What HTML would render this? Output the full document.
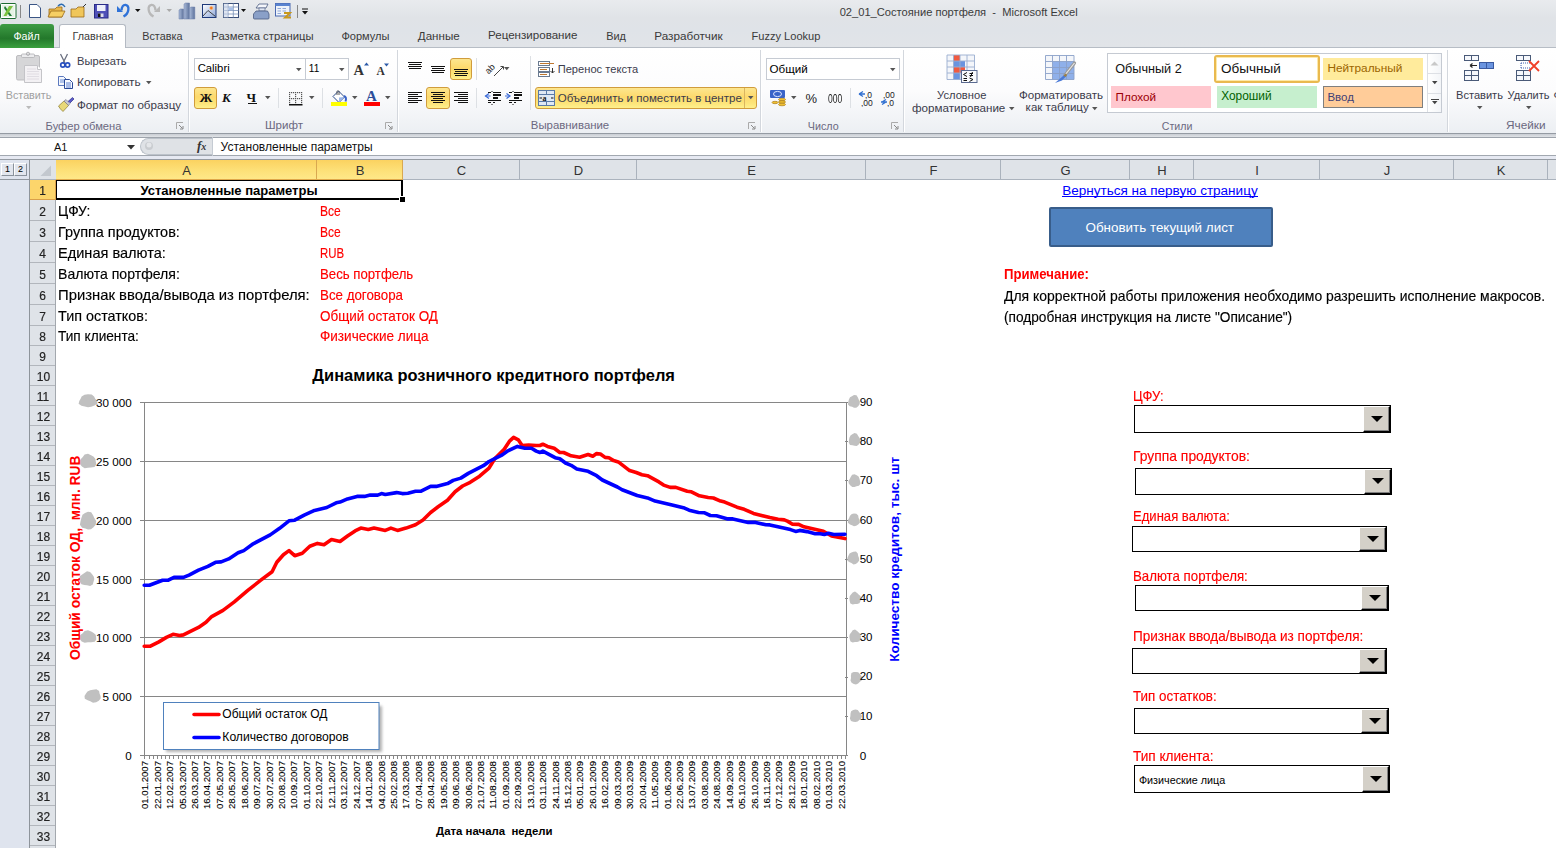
<!DOCTYPE html><html><head><meta charset="utf-8"><style>
*{margin:0;padding:0}
html,body{width:1556px;height:848px;overflow:hidden;background:#fff}
body{position:relative;font-family:"Liberation Sans",sans-serif}
.t{position:absolute;white-space:pre}
div{position:absolute}
svg{position:absolute}
</style></head><body>
<div style="position:absolute;left:0px;top:0px;width:1556px;height:47px;background:linear-gradient(#e9ebee 0px,#e0e3e7 18px,#dfe3e8 30px,#e1e4e8 46px)"></div>
<div class="t" style="left:839.7px;top:6.6px;font-size:11.14px;line-height:11.14px;color:#3b3b3b;">02_01_Состояние&#32;портфеля&#32;&#32;-&#32;&#32;Microsoft&#32;Excel</div>
<svg style="left:0;top:0" width="320" height="22">
 <rect x="0.5" y="3.5" width="15.5" height="15" rx="1" fill="#fff" stroke="#1b6b30"/>
 <rect x="2" y="5" width="12.5" height="12" fill="#e6f2e6"/>
 <path d="M5 6 L12 16 L9.5 16 L4 8 Z" fill="#1e7a36"/>
 <path d="M3.5 16 L9 6 L13 6 L6.5 16 Z" fill="#7cc33f"/>
 <rect x="20" y="5" width="1" height="13" fill="#888"/>
 <path d="M29.5 4.5 H37 L40.5 8 V17.5 H29.5 Z" fill="#fff" stroke="#3a5585"/>
 <path d="M49 9 H55 L57 7 H62 V17 H49 Z" fill="#e9b84a" stroke="#9a6a1a" stroke-width="0.8"/>
 <path d="M51 11 H65 L62 17 H48 Z" fill="#f6cf63" stroke="#9a6a1a" stroke-width="0.8"/>
 <path d="M58 6 Q62 2 65 7" stroke="#2a6ab0" fill="none" stroke-width="1.4"/>
 <path d="M71 9 H76 L78 7 H84 V17 H71 Z" fill="#f0c65a" stroke="#9a6a1a" stroke-width="0.8"/>
 <path d="M83 7 L86 4" stroke="#333" stroke-width="1"/>
 <rect x="94.5" y="4.5" width="13.5" height="13.5" fill="#4f50b8" stroke="#2a2c88"/>
 <rect x="97" y="5" width="8.5" height="6" fill="#eef0fa"/>
 <rect x="98" y="13.5" width="5.5" height="3.5" fill="#dde"/><rect x="98" y="13.5" width="2.5" height="3.5" fill="#111"/>
 <path d="M121.5 10.5 Q122 4.5 125.5 4.8 Q129 5.5 128.3 10 Q127.8 14 123.5 16.6" stroke="#2f72d8" fill="none" stroke-width="2.3"/>
 <path d="M117 6 V12 H123 Z" fill="#2f72d8"/>
 <path d="M135 9 H140.5 L137.75 12 Z" fill="#111"/>
 <path d="M155.5 10.5 Q155 4.5 151.5 4.8 Q148 5.5 148.7 10 Q149.2 14 153.5 16.6" stroke="#b8b8b8" fill="none" stroke-width="2.3"/>
 <path d="M160 6 V12 H154 Z" fill="#b8b8b8"/>
 <path d="M166.5 9 H172 L169.25 12 Z" fill="#aaa"/>
 <defs><linearGradient id="bg1" x1="0" x2="1"><stop offset="0" stop-color="#a9bad8"/><stop offset="1" stop-color="#5d729c"/></linearGradient>
 <linearGradient id="pic" x1="0" y1="0" x2="1" y2="1"><stop offset="0" stop-color="#ffffff"/><stop offset="1" stop-color="#8fa8d8"/></linearGradient></defs>
 <path d="M179 10 L180.5 9 H183.5 V19 H179 Z" fill="url(#bg1)" stroke="#6a7ea8" stroke-width="0.5"/>
 <path d="M184 4 L185.5 3 H189.5 V19 H184 Z" fill="url(#bg1)" stroke="#6a7ea8" stroke-width="0.5"/>
 <path d="M189.5 8 L191 7 H194.8 V19 H189.5 Z" fill="url(#bg1)" stroke="#6a7ea8" stroke-width="0.5"/>
 <rect x="202.5" y="4.5" width="13.5" height="13" fill="url(#pic)" stroke="#1f3a7a"/>
 <path d="M203 16 L208 10.5 L215.5 16.5" stroke="#333" fill="none" stroke-width="0.9"/>
 <circle cx="211.3" cy="8" r="1.7" fill="#f07a20" stroke="#ffd0a0" stroke-width="0.5"/>
 <rect x="223.5" y="3.5" width="15" height="14" fill="#fff" stroke="#3a4f78"/>
 <path d="M223.5 7 H238.5 M223.5 10.5 H238.5 M223.5 14 H238.5 M228 3.5 V17.5 M233.3 3.5 V17.5" stroke="#7890b8" stroke-width="0.8"/>
 <rect x="228.5" y="7.5" width="4.5" height="2.7" fill="#a8c0e8"/>
 <rect x="223.5" y="3.5" width="4.5" height="14" fill="#c8d4e8" opacity="0.6"/>
 <path d="M241 9 H246 L243.5 12 Z" fill="#111"/>
 <path d="M256 8 L259 4 H268 L266 8 Z" fill="#f4f6fa" stroke="#4a5a80" stroke-width="0.8"/>
 <rect x="259" y="8" width="6" height="3" fill="#dfe6f2" stroke="#4a5a80" stroke-width="0.6"/>
 <path d="M253.5 14 L256 11 H267.5 L269 14 V18 Q269 19 268 19 H254.5 Q253.5 19 253.5 18 Z" fill="#8aa0c8" stroke="#4a5a80" stroke-width="0.8"/>
 <rect x="275.5" y="3.5" width="14.5" height="12.5" fill="#eef3fa" stroke="#4a68b0"/>
 <rect x="275.5" y="3.5" width="14.5" height="2.5" fill="#5a84d0"/>
 <path d="M277.5 8.5 H281 M282.5 8.5 H286 M277.5 11 H281 M282.5 11 H286 M277.5 13.5 H281" stroke="#90a8d8" stroke-width="1.2"/>
 <path d="M284 13 H290 L285 17.5 H291" stroke="#c8981c" fill="none" stroke-width="1.8"/>
 <rect x="297" y="5" width="1" height="13" fill="#888"/>
 <rect x="302" y="8.5" width="6" height="1" fill="#111"/><path d="M302 11 H308 L305 14.5 Z" fill="#111"/>
</svg>
<div style="position:absolute;left:0px;top:47px;width:1556px;height:1px;background:#b7bdc5"></div>
<div style="position:absolute;left:0px;top:24px;width:54px;height:24px;border-radius:3px 3px 0 0;background:linear-gradient(#3e9c45,#23782b 60%,#3aa03e)"></div>
<div class="t" style="left:13.4px;top:30.9px;font-size:10.74px;line-height:10.74px;color:#fff;">Файл</div>
<div style="position:absolute;left:59px;top:24px;width:67px;height:24px;border:1px solid #b4bac3;border-bottom:none;border-radius:3px 3px 0 0;background:#fff;box-sizing:border-box"></div>
<div class="t" style="left:72.5px;top:30.9px;font-size:10.75px;line-height:10.75px;color:#3a3a3a;">Главная</div>
<div class="t" style="left:142.2px;top:30.8px;font-size:10.84px;line-height:10.84px;color:#3a3a3a;">Вставка</div>
<div class="t" style="left:211.3px;top:30.5px;font-size:11.28px;line-height:11.28px;color:#3a3a3a;">Разметка&#32;страницы</div>
<div class="t" style="left:341.4px;top:30.6px;font-size:11.05px;line-height:11.05px;color:#3a3a3a;">Формулы</div>
<div class="t" style="left:417.8px;top:30.2px;font-size:11.60px;line-height:11.60px;color:#3a3a3a;">Данные</div>
<div class="t" style="left:488.0px;top:30.2px;font-size:11.58px;line-height:11.58px;color:#3a3a3a;">Рецензирование</div>
<div class="t" style="left:606.2px;top:30.7px;font-size:10.94px;line-height:10.94px;color:#3a3a3a;">Вид</div>
<div class="t" style="left:654.3px;top:30.1px;font-size:11.73px;line-height:11.73px;color:#3a3a3a;">Разработчик</div>
<div class="t" style="left:751.5px;top:30.6px;font-size:11.07px;line-height:11.07px;color:#3a3a3a;">Fuzzy&#32;Lookup</div>
<div style="position:absolute;left:0px;top:48px;width:1556px;height:85px;background:linear-gradient(#ffffff 0%,#fcfcfd 50%,#eceff3 100%)"></div>
<div style="position:absolute;left:0px;top:133px;width:1556px;height:1px;background:#959ba3"></div>
<div style="position:absolute;left:0px;top:134px;width:1556px;height:3px;background:linear-gradient(#c9cdd3,#dfe2e6)"></div>
<div style="position:absolute;left:0px;top:137px;width:1556px;height:1px;background:#9ea4ac"></div>
<div style="position:absolute;left:188px;top:50px;width:1px;height:82px;background:#d3d7dd"></div>
<div style="position:absolute;left:189px;top:50px;width:1px;height:82px;background:#fff"></div>
<div style="position:absolute;left:397px;top:50px;width:1px;height:82px;background:#d3d7dd"></div>
<div style="position:absolute;left:398px;top:50px;width:1px;height:82px;background:#fff"></div>
<div style="position:absolute;left:760px;top:50px;width:1px;height:82px;background:#d3d7dd"></div>
<div style="position:absolute;left:761px;top:50px;width:1px;height:82px;background:#fff"></div>
<div style="position:absolute;left:903px;top:50px;width:1px;height:82px;background:#d3d7dd"></div>
<div style="position:absolute;left:904px;top:50px;width:1px;height:82px;background:#fff"></div>
<div style="position:absolute;left:1447px;top:50px;width:1px;height:82px;background:#d3d7dd"></div>
<div style="position:absolute;left:1448px;top:50px;width:1px;height:82px;background:#fff"></div>
<div class="t" style="left:45.6px;top:120.5px;font-size:11.17px;line-height:11.17px;color:#6b6880;">Буфер&#32;обмена</div>
<div class="t" style="left:265.0px;top:120.2px;font-size:11.55px;line-height:11.55px;color:#6b6880;">Шрифт</div>
<div class="t" style="left:530.8px;top:120.3px;font-size:11.40px;line-height:11.40px;color:#6b6880;">Выравнивание</div>
<div class="t" style="left:807.8px;top:120.9px;font-size:10.74px;line-height:10.74px;color:#6b6880;">Число</div>
<div class="t" style="left:1161.8px;top:121.0px;font-size:10.62px;line-height:10.62px;color:#6b6880;">Стили</div>
<div class="t" style="left:1506.0px;top:120.0px;font-size:11.81px;line-height:11.81px;color:#6b6880;">Ячейки</div>
<svg style="left:176px;top:122px" width="8" height="8"><path d="M0.5 7 V0.5 H7" stroke="#aaa" fill="none"/><path d="M3 3 L6.5 6.5 M4 7 H7 V4" stroke="#888" fill="none"/></svg>
<svg style="left:385px;top:122px" width="8" height="8"><path d="M0.5 7 V0.5 H7" stroke="#aaa" fill="none"/><path d="M3 3 L6.5 6.5 M4 7 H7 V4" stroke="#888" fill="none"/></svg>
<svg style="left:748px;top:122px" width="8" height="8"><path d="M0.5 7 V0.5 H7" stroke="#aaa" fill="none"/><path d="M3 3 L6.5 6.5 M4 7 H7 V4" stroke="#888" fill="none"/></svg>
<svg style="left:891px;top:122px" width="8" height="8"><path d="M0.5 7 V0.5 H7" stroke="#aaa" fill="none"/><path d="M3 3 L6.5 6.5 M4 7 H7 V4" stroke="#888" fill="none"/></svg>
<svg style="left:14px;top:51px" width="30" height="34">
 <rect x="2.5" y="4.5" width="23" height="24.5" rx="1.5" fill="#d6d6d8" stroke="#bdbdc0"/>
 <rect x="7.5" y="3" width="13" height="3.5" rx="1" fill="#ececee" stroke="#b0b0b4" stroke-width="0.8"/>
 <circle cx="14" cy="2.8" r="1.6" fill="none" stroke="#a8a8ac" stroke-width="0.9"/>
 <path d="M10.5 14.5 H23.5 L27.5 18.5 V31.5 H10.5 Z" fill="#f3f1f4" stroke="#c4c4c8"/>
 <path d="M23.5 14.5 V18.5 H27.5" fill="#fff" stroke="#c4c4c8"/>
 <path d="M13 18 H22 M13 20.5 H25 M13 23 H25 M13 25.5 H25 M13 28 H25" stroke="#dad8de" stroke-width="0.8"/>
</svg>
<div class="t" style="left:5.8px;top:90.2px;font-size:10.76px;line-height:10.76px;color:#a0a0a0;">Вставить</div>
<svg style="left:26.0px;top:106px" width="6" height="4"><path d="M0 0 H5.5 L2.75 3.2 Z" fill="#bbb"/></svg>
<svg style="left:58px;top:53px" width="14" height="16">
 <path d="M2.5 1 L7 10 M9.5 1 L5 10" stroke="#6a7080" stroke-width="1.3"/>
 <circle cx="4.8" cy="12" r="2.1" fill="none" stroke="#2850c0" stroke-width="1.7"/>
 <circle cx="9.6" cy="12" r="2.1" fill="none" stroke="#2850c0" stroke-width="1.7"/>
</svg>
<div class="t" style="left:77.0px;top:55.6px;font-size:11.15px;line-height:11.15px;color:#3b3b4b;">Вырезать</div>
<svg style="left:57px;top:76px" width="17" height="14">
 <path d="M1.5 0.5 H6.5 L9 3 V9.5 H1.5 Z" fill="#f4f7fc" stroke="#4a6ab8" stroke-width="0.9"/>
 <path d="M3 4 H7 M3 6 H7.5" stroke="#5a80d0" stroke-width="0.9"/>
 <path d="M7.5 3.5 H12.5 L15.5 6.5 V12.5 H7.5 Z" fill="#f8faff" stroke="#2a4a98"/>
 <path d="M9 7 H14 M9 9 H14 M9 11 H14" stroke="#4a72c8" stroke-width="0.9"/>
</svg>
<div class="t" style="left:77.0px;top:76.5px;font-size:11.83px;line-height:11.83px;color:#3b3b4b;">Копировать</div>
<svg style="left:146.0px;top:81px" width="6" height="4"><path d="M0 0 H5.5 L2.75 3.2 Z" fill="#555"/></svg>
<svg style="left:57px;top:97px" width="18" height="16">
 <path d="M1.5 9 L7 4 L11.5 8.5 L6 14.5 Q3 12 1.5 9 Z" fill="#e8d878" stroke="#8a7a30" stroke-width="0.7"/>
 <path d="M7 4 L9 2.5 L13 6.5 L11.5 8.5 Z" fill="#c8c8d0" stroke="#707080" stroke-width="0.6"/>
 <path d="M11 4.5 L15.5 0.5 L17 2 L13 6" fill="#5a5ac8" stroke="#30308a" stroke-width="0.7"/>
</svg>
<div class="t" style="left:76.9px;top:99.2px;font-size:11.63px;line-height:11.63px;color:#3b3b4b;">Формат&#32;по&#32;образцу</div>
<div style="position:absolute;left:194px;top:58px;width:112px;height:22px;box-sizing:border-box;border:1px solid #c6cbd3;background:#fff"></div>
<div style="position:absolute;left:305px;top:58px;width:44px;height:22px;box-sizing:border-box;border:1px solid #c6cbd3;background:#fff"></div>
<div class="t" style="left:197.7px;top:63.4px;font-size:11.29px;line-height:11.29px;color:#000;">Calibri</div>
<div class="t" style="left:308.8px;top:64.4px;font-size:10.12px;line-height:10.12px;color:#000;">11</div>
<svg style="left:295.5px;top:67.5px" width="6" height="4"><path d="M0 0 H5.5 L2.75 3.2 Z" fill="#555"/></svg>
<svg style="left:338.8px;top:67.5px" width="6" height="4"><path d="M0 0 H5.5 L2.75 3.2 Z" fill="#555"/></svg>
<div class="t" style="left:353.5px;top:62.5px;font-family:'Liberation Serif';font-size:14.5px;line-height:14.5px;font-weight:bold;color:#333">A</div>
<svg style="left:363.5px;top:61.5px" width="6" height="4"><path d="M0 3.5 L2.5 0.5 L5 3.5Z" fill="#2c5aa8"/></svg>
<div class="t" style="left:376.5px;top:65.5px;font-family:'Liberation Serif';font-size:11.5px;line-height:11.5px;font-weight:bold;color:#333">A</div>
<svg style="left:384px;top:62.5px" width="6" height="4"><path d="M0 0.5 L5 0.5 L2.5 3.5Z" fill="#2c5aa8"/></svg>
<div style="position:absolute;left:194px;top:87px;width:23px;height:22px;box-sizing:border-box;border:1px solid #d09c3c;border-radius:3px;background:linear-gradient(#fde68f,#fdd96c 45%,#fde479 75%,#fff08c)"></div>
<div class="t" style="left:199.5px;top:91px;font-family:'Liberation Serif';font-size:13px;line-height:13px;font-weight:bold;color:#111">Ж</div>
<div class="t" style="left:222px;top:91px;font-family:'Liberation Serif';font-size:13px;line-height:13px;font-weight:bold;font-style:italic;color:#111">К</div>
<div class="t" style="left:246.5px;top:91px;font-family:'Liberation Serif';font-size:13px;line-height:13px;font-weight:bold;color:#111">Ч</div>
<div style="position:absolute;left:248px;top:103px;width:9px;height:1px;background:#111"></div>
<svg style="left:265.0px;top:96px" width="6" height="4"><path d="M0 0 H5.5 L2.75 3.2 Z" fill="#555"/></svg>
<div style="position:absolute;left:278px;top:88px;width:1px;height:20px;background:#dde0e4"></div>
<svg style="left:289px;top:91px" width="14" height="15"><rect x="0" y="1" width="1.2" height="1.2" fill="#555"/><rect x="2" y="1" width="1.2" height="1.2" fill="#555"/><rect x="4" y="1" width="1.2" height="1.2" fill="#555"/><rect x="6" y="1" width="1.2" height="1.2" fill="#555"/><rect x="8" y="1" width="1.2" height="1.2" fill="#555"/><rect x="10" y="1" width="1.2" height="1.2" fill="#555"/><rect x="12" y="1" width="1.2" height="1.2" fill="#555"/><rect x="0" y="3" width="1.2" height="1.2" fill="#555"/><rect x="6" y="3" width="1.2" height="1.2" fill="#555"/><rect x="12" y="3" width="1.2" height="1.2" fill="#555"/><rect x="0" y="5" width="1.2" height="1.2" fill="#555"/><rect x="6" y="5" width="1.2" height="1.2" fill="#555"/><rect x="12" y="5" width="1.2" height="1.2" fill="#555"/><rect x="0" y="7" width="1.2" height="1.2" fill="#555"/><rect x="2" y="7" width="1.2" height="1.2" fill="#555"/><rect x="4" y="7" width="1.2" height="1.2" fill="#555"/><rect x="6" y="7" width="1.2" height="1.2" fill="#555"/><rect x="8" y="7" width="1.2" height="1.2" fill="#555"/><rect x="10" y="7" width="1.2" height="1.2" fill="#555"/><rect x="12" y="7" width="1.2" height="1.2" fill="#555"/><rect x="0" y="9" width="1.2" height="1.2" fill="#555"/><rect x="6" y="9" width="1.2" height="1.2" fill="#555"/><rect x="12" y="9" width="1.2" height="1.2" fill="#555"/><rect x="0" y="11" width="1.2" height="1.2" fill="#555"/><rect x="6" y="11" width="1.2" height="1.2" fill="#555"/><rect x="12" y="11" width="1.2" height="1.2" fill="#555"/><rect x="0" y="13" width="13.5" height="1.5" fill="#111"/></svg>
<svg style="left:309.1px;top:96px" width="6" height="4"><path d="M0 0 H5.5 L2.75 3.2 Z" fill="#555"/></svg>
<div style="position:absolute;left:322px;top:88px;width:1px;height:20px;background:#dde0e4"></div>
<svg style="left:331px;top:89px" width="17" height="18">
 <path d="M2 7.5 L7.5 2 L13.5 8 L8 13.5 Z" fill="#fff" stroke="#2a4a88" stroke-width="1"/>
 <path d="M8 8.5 L13.5 8 L8 13.5 Z" fill="#9ab6e8"/>
 <path d="M6 6 V2.5 Q7 0.5 8 2.5 V6" stroke="#444" fill="none" stroke-width="0.9"/>
 <path d="M13 7 Q16 8 14.5 12.5" stroke="#3a64c8" stroke-width="2" fill="none"/>
 <rect x="0" y="13" width="16" height="4" fill="#ffff00"/>
</svg>
<svg style="left:352.2px;top:96px" width="6" height="4"><path d="M0 0 H5.5 L2.75 3.2 Z" fill="#555"/></svg>
<div class="t" style="left:366px;top:89px;font-family:'Liberation Serif';font-size:15px;line-height:15px;font-weight:bold;color:#2b4e9a">A</div>
<div style="position:absolute;left:364px;top:102px;width:16px;height:4px;background:#ff0000"></div>
<svg style="left:385.0px;top:96px" width="6" height="4"><path d="M0 0 H5.5 L2.75 3.2 Z" fill="#555"/></svg>
<svg style="left:408px;top:62px" width="15" height="14"><rect x="0.0" y="0" width="14" height="1" fill="#111"/><rect x="1.0" y="2" width="12" height="1" fill="#111"/><rect x="0.0" y="4" width="14" height="1" fill="#111"/><rect x="1.0" y="6" width="12" height="1" fill="#111"/></svg>
<svg style="left:431px;top:66px" width="15" height="14"><rect x="0.0" y="0" width="14" height="1" fill="#111"/><rect x="1.0" y="2" width="12" height="1" fill="#111"/><rect x="0.0" y="4" width="14" height="1" fill="#111"/><rect x="1.0" y="6" width="12" height="1" fill="#111"/></svg>
<div style="position:absolute;left:450px;top:58px;width:22px;height:22px;box-sizing:border-box;border:1px solid #d09c3c;border-radius:3px;background:linear-gradient(#fde68f,#fdd96c 45%,#fde479 75%,#fff08c)"></div>
<svg style="left:454px;top:69px" width="15" height="14"><rect x="0.0" y="0" width="14" height="1" fill="#111"/><rect x="1.0" y="2" width="12" height="1" fill="#111"/><rect x="0.0" y="4" width="14" height="1" fill="#111"/><rect x="1.0" y="6" width="12" height="1" fill="#111"/></svg>
<svg style="left:408px;top:92px" width="15" height="14"><rect x="0" y="0" width="14" height="1" fill="#111"/><rect x="0" y="2" width="10" height="1" fill="#111"/><rect x="0" y="4" width="14" height="1" fill="#111"/><rect x="0" y="6" width="10" height="1" fill="#111"/><rect x="0" y="8" width="14" height="1" fill="#111"/><rect x="0" y="10" width="10" height="1" fill="#111"/></svg>
<div style="position:absolute;left:426px;top:87px;width:24px;height:22px;box-sizing:border-box;border:1px solid #d09c3c;border-radius:3px;background:linear-gradient(#fde68f,#fdd96c 45%,#fde479 75%,#fff08c)"></div>
<svg style="left:431px;top:92px" width="15" height="14"><rect x="0.0" y="0" width="14" height="1" fill="#111"/><rect x="2.0" y="2" width="10" height="1" fill="#111"/><rect x="0.0" y="4" width="14" height="1" fill="#111"/><rect x="2.0" y="6" width="10" height="1" fill="#111"/><rect x="0.0" y="8" width="14" height="1" fill="#111"/><rect x="2.0" y="10" width="10" height="1" fill="#111"/></svg>
<svg style="left:454px;top:92px" width="15" height="14"><rect x="0" y="0" width="14" height="1" fill="#111"/><rect x="4" y="2" width="10" height="1" fill="#111"/><rect x="0" y="4" width="14" height="1" fill="#111"/><rect x="4" y="6" width="10" height="1" fill="#111"/><rect x="0" y="8" width="14" height="1" fill="#111"/><rect x="4" y="10" width="10" height="1" fill="#111"/></svg>
<div style="position:absolute;left:476px;top:58px;width:1px;height:22px;background:#dde0e4"></div>
<div style="position:absolute;left:476px;top:88px;width:1px;height:20px;background:#dde0e4"></div>
<svg style="left:485px;top:61px" width="24" height="17">
 <text x="0" y="0" font-family="Liberation Sans" font-size="9" transform="translate(3.5 13.5) rotate(-45)" fill="#222">ab</text>
 <path d="M9 15 L18 6" stroke="#444"/><path d="M15.5 5.5 L18.5 5.5 L18.5 8.5" stroke="#444" fill="none"/>
</svg>
<svg style="left:503.5px;top:67px" width="6" height="4"><path d="M0 0 H5.5 L2.75 3.2 Z" fill="#555"/></svg>
<svg style="left:484px;top:90px" width="42" height="17">
 <path d="M5 3.5 L1.5 6 L5 8.5" stroke="#3a6ad8" stroke-width="1.2" fill="none"/><rect x="1.5" y="5.5" width="5" height="1" fill="#3a6ad8"/>
 <rect x="4" y="2" width="3" height="1" fill="#111"/><rect x="9" y="2" width="8" height="1" fill="#111"/>
 <rect x="9" y="4" width="8" height="2" fill="#111"/><rect x="9" y="7" width="5" height="2" fill="#111"/>
 <rect x="4" y="10" width="13" height="1" fill="#111"/><rect x="4" y="12" width="3" height="1" fill="#111"/><rect x="9" y="12" width="2" height="1" fill="#111"/>
 <rect x="7.5" y="1" width="1" height="1" fill="#111"/><rect x="7.5" y="14" width="1" height="1" fill="#111"/>
 <path d="M22.5 3.5 L26 6 L22.5 8.5" stroke="#3a6ad8" stroke-width="1.2" fill="none"/><rect x="21" y="5.5" width="5" height="1" fill="#3a6ad8"/>
 <rect x="25" y="2" width="3" height="1" fill="#111"/><rect x="30" y="2" width="8" height="1" fill="#111"/>
 <rect x="30" y="4" width="8" height="2" fill="#111"/><rect x="30" y="7" width="5" height="2" fill="#111"/>
 <rect x="25" y="10" width="13" height="1" fill="#111"/><rect x="25" y="12" width="3" height="1" fill="#111"/><rect x="30" y="12" width="2" height="1" fill="#111"/>
 <rect x="28.5" y="1" width="1" height="1" fill="#111"/><rect x="28.5" y="14" width="1" height="1" fill="#111"/>
</svg>
<div style="position:absolute;left:530px;top:56px;width:1px;height:54px;background:#dde0e4"></div>
<svg style="left:537px;top:60px" width="18" height="17">
 <rect x="1.5" y="1.5" width="11" height="4" fill="#fff" stroke="#6a7a90"/>
 <rect x="1.5" y="7.5" width="11" height="4" fill="#fff" stroke="#6a7a90"/>
 <rect x="1.5" y="12.5" width="11" height="4" fill="#fff" stroke="#6a7a90"/>
 <path d="M3 3.5 H17 M3 9.5 H10 M3 14.5 H10" stroke="#c07830"/>
 <path d="M15.5 8 V13 M13.5 11 L15.5 13 L17.5 11" stroke="#333" fill="none"/>
</svg>
<div class="t" style="left:557.7px;top:63.6px;font-size:11.14px;line-height:11.14px;color:#3b3b4b;">Перенос&#32;текста</div>
<div style="position:absolute;left:535px;top:87px;width:222px;height:22px;box-sizing:border-box;border:1px solid #d09c3c;border-radius:3px;background:linear-gradient(#fde68f,#fdd96c 45%,#fde479 75%,#fff08c)"></div>
<div style="position:absolute;left:744px;top:88px;width:1px;height:20px;background:#d9b560"></div>
<svg style="left:538px;top:90px" width="17" height="16">
 <rect x="0.5" y="0.5" width="16" height="15" fill="#dfe8f4" stroke="#5a7aa8"/>
 <path d="M0.5 4.5 H16.5 M0.5 11.5 H16.5 M8.5 0.5 V4.5 M8.5 11.5 V15.5" stroke="#5a7aa8"/>
 <text x="4.5" y="10.5" font-family="Liberation Serif" font-size="8" font-weight="bold" fill="#111">a</text>
 <path d="M1.5 8 H4 M13 8 H15.5" stroke="#111"/>
</svg>
<div class="t" style="left:557.7px;top:93.2px;font-size:11.53px;line-height:11.53px;color:#3b3b4b;">Объединить&#32;и&#32;поместить&#32;в&#32;центре</div>
<svg style="left:748.1px;top:96px" width="6" height="4"><path d="M0 0 H5.5 L2.75 3.2 Z" fill="#555"/></svg>
<div style="position:absolute;left:766px;top:58px;width:134px;height:22px;box-sizing:border-box;border:1px solid #c6cbd3;background:#fff"></div>
<div class="t" style="left:769.6px;top:63.2px;font-size:11.61px;line-height:11.61px;color:#000;">Общий</div>
<svg style="left:889.8px;top:67.5px" width="6" height="4"><path d="M0 0 H5.5 L2.75 3.2 Z" fill="#555"/></svg>
<svg style="left:770px;top:90px" width="17" height="17">
 <rect x="0" y="0" width="15" height="8" rx="1" fill="#3a64c8"/>
 <ellipse cx="7.5" cy="4" rx="4" ry="2.6" fill="none" stroke="#dfe8ff" stroke-width="1"/>
 <ellipse cx="12" cy="9.5" rx="3.5" ry="1.3" fill="#f0c030" stroke="#a07010" stroke-width="0.6"/>
 <ellipse cx="12" cy="12" rx="3.5" ry="1.3" fill="#f0c030" stroke="#a07010" stroke-width="0.6"/>
 <ellipse cx="12" cy="14.5" rx="3.5" ry="1.3" fill="#f0c030" stroke="#a07010" stroke-width="0.6"/>
 <ellipse cx="5" cy="12.5" rx="3" ry="1.2" fill="#f0c030" stroke="#a07010" stroke-width="0.6"/>
</svg>
<svg style="left:790.7px;top:96px" width="6" height="4"><path d="M0 0 H5.5 L2.75 3.2 Z" fill="#555"/></svg>
<div class="t" style="left:805.5px;top:91.5px;font-size:13.00px;line-height:13.00px;color:#222;">%</div>
<div class="t" style="left:827.5px;top:92.1px;font-size:13.50px;line-height:13.50px;color:#222;transform:scaleX(0.63);transform-origin:0 0;">000</div>
<div style="position:absolute;left:850px;top:88px;width:1px;height:20px;background:#dde0e4"></div>
<svg style="left:858px;top:90px" width="40" height="17">
 <path d="M1 4 L5 1.5 M1 4 L5 6.5 M1 4 H7" stroke="#2f6fd0" stroke-width="1.3" fill="none"/>
 <text x="7" y="8" font-family="Liberation Sans" font-size="8.5" fill="#222">,0</text>
 <text x="3" y="15.5" font-family="Liberation Sans" font-size="8.5" fill="#222">,00</text>
 <text x="25" y="8" font-family="Liberation Sans" font-size="8.5" fill="#222">,00</text>
 <path d="M24 12 L28 9.5 M28 12 L24 14.5 M23 12 H29" stroke="#2f6fd0" stroke-width="1.3" fill="none"/>
 <text x="29" y="15.5" font-family="Liberation Sans" font-size="8.5" fill="#222">,0</text>
</svg>
<svg style="left:946px;top:54px" width="32" height="30">
 <rect x="1" y="1" width="27.5" height="24.5" fill="#f4f6fa"/>
 <rect x="7.5" y="1" width="6.5" height="6" fill="#f05a40"/>
 <rect x="7.5" y="7" width="11.5" height="6" fill="#6a94e0"/>
 <rect x="7.5" y="13" width="11.5" height="6" fill="#f05a40"/>
 <rect x="7.5" y="19" width="6.5" height="6.5" fill="#6a94e0"/>
 <path d="M1 1 H28.5 V25.5 H1 Z M1 7 H28.5 M1 13 H28.5 M1 19 H28.5 M7.5 1 V25.5 M14 1 V25.5 M21 1 V25.5" stroke="#9aaed0" stroke-width="0.9" fill="none"/>
 <rect x="15.5" y="16.5" width="15.5" height="12" fill="#fafbfd" stroke="#5a6a90"/>
 <path d="M21 18.5 L17.5 20.5 L21 22.5 M17.5 24.5 H21 M17.5 26.5 H21 M23.5 24 L27 25.5 L23.5 27.5 M23.5 19.5 H27 M23.5 21.5 H27 M26.5 18 L24.5 23" stroke="#111" stroke-width="1" fill="none"/>
</svg>
<div class="t" style="left:937.1px;top:89.5px;font-size:11.17px;line-height:11.17px;color:#3b3b4b;">Условное</div>
<div class="t" style="left:912.0px;top:102.2px;font-size:11.63px;line-height:11.63px;color:#3b3b4b;">форматирование</div>
<svg style="left:1009.2px;top:107px" width="6" height="4"><path d="M0 0 H5.5 L2.75 3.2 Z" fill="#555"/></svg>
<svg style="left:1044px;top:54px" width="34" height="30">
 <rect x="1.5" y="1.5" width="28.5" height="24" fill="#f4f6fa"/>
 <rect x="8.5" y="7.5" width="21.5" height="18" fill="#8fb0ea"/>
 <path d="M1.5 1.5 H30 V25.5 H1.5 Z M1.5 7.5 H30 M1.5 13.5 H30 M1.5 19.5 H30 M8.5 1.5 V25.5 M15.5 1.5 V25.5 M22.5 1.5 V25.5" stroke="#8aa0c8" stroke-width="0.9" fill="none"/>
 <path d="M30.5 9 L21 21" stroke="#9a9a9a" stroke-width="3.2" stroke-linecap="round"/>
 <path d="M30.5 9 L21 21" stroke="#e8e8e8" stroke-width="1.2"/>
 <path d="M22 19.5 L19 22 L11 29 L18 26.5 L22.5 22 Z" fill="#4a7ad8"/>
 <path d="M22 19.5 L19.5 21.5 L21.5 23 L23 21 Z" fill="#a08040"/>
</svg>
<div class="t" style="left:1018.9px;top:89.2px;font-size:11.60px;line-height:11.60px;color:#3b3b4b;">Форматировать</div>
<div class="t" style="left:1025.6px;top:102.2px;font-size:11.54px;line-height:11.54px;color:#3b3b4b;">как&#32;таблицу</div>
<svg style="left:1092.0px;top:107px" width="6" height="4"><path d="M0 0 H5.5 L2.75 3.2 Z" fill="#555"/></svg>
<div style="position:absolute;left:1107px;top:53px;width:335px;height:60px;box-sizing:border-box;border:1px solid #c5cad2;background:#fff"></div>
<div style="position:absolute;left:1427px;top:54px;width:14px;height:58px;box-sizing:border-box;border-left:1px solid #dde0e5;background:linear-gradient(90deg,#fff,#f3f5f8)"></div>
<div style="position:absolute;left:1428px;top:73px;width:13px;height:1px;background:#dde0e5"></div>
<div style="position:absolute;left:1428px;top:93px;width:13px;height:1px;background:#dde0e5"></div>
<svg style="left:1430px;top:61px" width="9" height="5"><path d="M0.5 4.5 L4.5 0.5 L8.5 4.5Z" fill="#c8c8c8"/></svg>
<svg style="left:1432.0px;top:81px" width="6" height="4"><path d="M0 0 H5.5 L2.75 3.2 Z" fill="#444"/></svg>
<div style="position:absolute;left:1431px;top:99px;width:8px;height:1px;background:#444"></div>
<svg style="left:1432.0px;top:101px" width="6" height="4"><path d="M0 0 H5.5 L2.75 3.2 Z" fill="#444"/></svg>
<div class="t" style="left:1115.2px;top:62.5px;font-size:12.66px;line-height:12.66px;color:#111;">Обычный&#32;2</div>
<div style="position:absolute;left:1214px;top:55px;width:106px;height:28px;box-sizing:border-box;border:2px solid #e9b94f;border-radius:3px;background:#fff;box-shadow:inset 0 0 0 1px #fde9a8"></div>
<div class="t" style="left:1221.0px;top:61.7px;font-size:13.53px;line-height:13.53px;color:#111;">Обычный</div>
<div style="position:absolute;left:1323px;top:58px;width:100px;height:22px;background:#ffeb9c"></div>
<div class="t" style="left:1327.4px;top:63.2px;font-size:11.83px;line-height:11.83px;color:#9c6500;">Нейтральный</div>
<div style="position:absolute;left:1111px;top:86px;width:100px;height:22px;background:#ffc7ce"></div>
<div class="t" style="left:1115.5px;top:91.2px;font-size:11.76px;line-height:11.76px;color:#9c0006;">Плохой</div>
<div style="position:absolute;left:1217px;top:86px;width:100px;height:22px;background:#c6efce"></div>
<div class="t" style="left:1221.2px;top:91.1px;font-size:11.90px;line-height:11.90px;color:#006100;">Хороший</div>
<div style="position:absolute;left:1323px;top:86px;width:100px;height:22px;box-sizing:border-box;border:1px solid #7f7f7f;background:#ffcc99"></div>
<div class="t" style="left:1327.4px;top:91.5px;font-size:11.50px;line-height:11.50px;color:#3f3f76;">Ввод</div>
<svg style="left:1463px;top:54px" width="34" height="28">
 <rect x="1.5" y="1.5" width="14" height="5" fill="#f6f8fc" stroke="#4a5a78"/><path d="M8.5 1.5 V6.5" stroke="#4a5a78"/>
 <rect x="1.5" y="16.5" width="14" height="10" fill="#f6f8fc" stroke="#4a5a78"/><path d="M8.5 16.5 V26.5 M1.5 21.5 H15.5" stroke="#4a5a78"/>
 <rect x="16.5" y="8.5" width="14" height="6" fill="#6a94e0" stroke="#3a5aa0"/><path d="M23.5 8.5 V14.5" stroke="#3a5aa0"/>
 <path d="M7 11.5 H14 M7 11.5 L9.5 9.5 M7 11.5 L9.5 13.5" stroke="#222" stroke-width="1.2" fill="none"/>
</svg>
<div class="t" style="left:1456.0px;top:89.9px;font-size:11.09px;line-height:11.09px;color:#3b3b4b;">Вставить</div>
<svg style="left:1477.0px;top:106px" width="6" height="4"><path d="M0 0 H5.5 L2.75 3.2 Z" fill="#555"/></svg>
<svg style="left:1515px;top:54px" width="30" height="28">
 <rect x="1.5" y="1.5" width="14" height="5" fill="#f6f8fc" stroke="#4a5a78"/><path d="M8.5 1.5 V6.5" stroke="#4a5a78"/>
 <rect x="1.5" y="16.5" width="14" height="10" fill="#f6f8fc" stroke="#4a5a78"/><path d="M8.5 16.5 V26.5 M1.5 21.5 H15.5" stroke="#4a5a78"/>
 <path d="M6 9 H16 M6 14 H16 M6 9 V14" stroke="#4060b0" stroke-dasharray="1 1" fill="none"/>
 <path d="M14 7 L24 17 M24 7 L14 17" stroke="#f04028" stroke-width="1.8"/>
</svg>
<div class="t" style="left:1507.6px;top:90.0px;font-size:10.98px;line-height:10.98px;color:#3b3b4b;">Удалить</div>
<svg style="left:1526.0px;top:106px" width="6" height="4"><path d="M0 0 H5.5 L2.75 3.2 Z" fill="#555"/></svg>
<div class="t" style="left:1553.5px;top:89.6px;font-size:11.50px;line-height:11.50px;color:#3b3b4b;">Ф</div>
<div style="position:absolute;left:0px;top:138px;width:1556px;height:17px;background:#fff"></div>
<div style="position:absolute;left:0px;top:155px;width:1556px;height:1px;background:#a2a8b0"></div>
<div style="position:absolute;left:0px;top:156px;width:1556px;height:3px;background:#e6e9f2"></div>
<div style="position:absolute;left:0px;top:159px;width:1556px;height:1px;background:#959ba3"></div>
<div class="t" style="left:54.0px;top:142.2px;font-size:10.96px;line-height:10.96px;color:#111;">A1</div>
<svg style="left:127px;top:145px" width="8" height="5"><path d="M0 0 H8 L4 4.5Z" fill="#333"/></svg>
<div style="position:absolute;left:140px;top:138px;width:73px;height:17px;box-sizing:border-box;border:1px solid #bcc2ca;border-right:none;border-radius:9px 0 0 9px;background:#dfe2e6"></div>
<svg style="left:143px;top:140px" width="12" height="12"><circle cx="6" cy="6" r="4" fill="#c9ccd0"/><circle cx="6" cy="5" r="2.5" fill="#e4e6e9"/></svg>
<div style="position:absolute;left:212px;top:137px;width:1px;height:19px;background:#c5cbd3"></div>
<div class="t" style="left:197px;top:139px;font-family:'Liberation Serif';font-style:italic;font-weight:bold;font-size:13px;line-height:13px;color:#333">f<span style="font-size:10px">x</span></div>
<div class="t" style="left:220.6px;top:141.3px;font-size:12.04px;line-height:12.04px;color:#111;">Установленные&#32;параметры</div>
<div style="position:absolute;left:0px;top:160px;width:29px;height:688px;background:#dfe4ee"></div>
<div style="position:absolute;left:0px;top:179px;width:29px;height:1px;background:#8f969e"></div>
<div style="position:absolute;left:29px;top:160px;width:1px;height:688px;background:#8e949b"></div>
<div style="position:absolute;left:1px;top:163px;width:13px;height:13px;box-sizing:border-box;border:1px solid #8a929c;border-top-color:#fff;border-left-color:#fff;background:#e2e6ee"></div>
<div class="t" style="left:5.0px;top:164.7px;font-size:9.00px;line-height:9.00px;color:#000;">1</div>
<div style="position:absolute;left:14px;top:163px;width:13px;height:13px;box-sizing:border-box;border:1px solid #8a929c;border-top-color:#fff;border-left-color:#fff;background:#e2e6ee"></div>
<div class="t" style="left:18.0px;top:164.7px;font-size:9.00px;line-height:9.00px;color:#000;">2</div>
<div style="position:absolute;left:30px;top:160px;width:26px;height:20px;background:#dfe3e8"></div>
<svg style="left:38px;top:165px" width="16" height="14"><path d="M13 0.5 V11 H2.5 Z" fill="#c3c8ce"/></svg>
<div style="position:absolute;left:56px;top:160px;width:1500px;height:20px;background:#dfe3e8"></div>
<div style="position:absolute;left:30px;top:179px;width:1526px;height:1px;background:#abb3bd"></div>
<div style="position:absolute;left:56px;top:160px;width:347px;height:20px;background:linear-gradient(#fbd260,#fde179 55%,#ffe98a)"></div>
<div style="position:absolute;left:56px;top:179px;width:347px;height:1px;background:#e0a84a"></div>
<div style="position:absolute;left:316px;top:160px;width:1px;height:19px;background:#d9a850"></div>
<div class="t" style="left:182.2px;top:164.0px;font-size:13.00px;line-height:13.00px;color:#333;">A</div>
<div style="position:absolute;left:402px;top:160px;width:1px;height:19px;background:#aab2bc"></div>
<div class="t" style="left:355.7px;top:164.0px;font-size:13.00px;line-height:13.00px;color:#333;">B</div>
<div style="position:absolute;left:519px;top:160px;width:1px;height:19px;background:#aab2bc"></div>
<div class="t" style="left:456.8px;top:164.0px;font-size:13.00px;line-height:13.00px;color:#333;">C</div>
<div style="position:absolute;left:636px;top:160px;width:1px;height:19px;background:#aab2bc"></div>
<div class="t" style="left:573.8px;top:164.0px;font-size:13.00px;line-height:13.00px;color:#333;">D</div>
<div style="position:absolute;left:865px;top:160px;width:1px;height:19px;background:#aab2bc"></div>
<div class="t" style="left:747.2px;top:164.0px;font-size:13.00px;line-height:13.00px;color:#333;">E</div>
<div style="position:absolute;left:1000px;top:160px;width:1px;height:19px;background:#aab2bc"></div>
<div class="t" style="left:929.5px;top:164.0px;font-size:13.00px;line-height:13.00px;color:#333;">F</div>
<div style="position:absolute;left:1129px;top:160px;width:1px;height:19px;background:#aab2bc"></div>
<div class="t" style="left:1060.4px;top:164.0px;font-size:13.00px;line-height:13.00px;color:#333;">G</div>
<div style="position:absolute;left:1193px;top:160px;width:1px;height:19px;background:#aab2bc"></div>
<div class="t" style="left:1157.3px;top:164.0px;font-size:13.00px;line-height:13.00px;color:#333;">H</div>
<div style="position:absolute;left:1319px;top:160px;width:1px;height:19px;background:#aab2bc"></div>
<div class="t" style="left:1255.2px;top:164.0px;font-size:13.00px;line-height:13.00px;color:#333;">I</div>
<div style="position:absolute;left:1453px;top:160px;width:1px;height:19px;background:#aab2bc"></div>
<div class="t" style="left:1383.8px;top:164.0px;font-size:13.00px;line-height:13.00px;color:#333;">J</div>
<div style="position:absolute;left:1547px;top:160px;width:1px;height:19px;background:#aab2bc"></div>
<div class="t" style="left:1496.7px;top:164.0px;font-size:13.00px;line-height:13.00px;color:#333;">K</div>
<div style="position:absolute;left:1600px;top:160px;width:1px;height:19px;background:#aab2bc"></div>
<div class="t" style="left:1570.9px;top:164.0px;font-size:13.00px;line-height:13.00px;color:#333;">L</div>
<div style="position:absolute;left:402px;top:160px;width:1px;height:20px;background:#d9a850"></div>
<div style="position:absolute;left:30px;top:180px;width:26px;height:668px;background:#dfe3e8"></div>
<div style="position:absolute;left:55px;top:180px;width:1px;height:668px;background:#a3a8ae"></div>
<div style="position:absolute;left:30px;top:180px;width:25px;height:19px;background:#fcd56b"></div>
<div style="position:absolute;left:30px;top:199px;width:26px;height:1px;background:#d9a04a"></div>
<div style="position:absolute;left:55px;top:180px;width:1px;height:20px;background:#d9a04a"></div>
<div class="t" style="left:39.3px;top:183.7px;font-size:13.30px;line-height:13.30px;color:#222;transform:scaleX(0.9);transform-origin:50% 0;-webkit-text-stroke:0.2px;">1</div>
<div style="position:absolute;left:30px;top:220px;width:25px;height:1px;background:#b2b6bc"></div>
<div class="t" style="left:39.3px;top:204.7px;font-size:13.30px;line-height:13.30px;color:#222;transform:scaleX(0.9);transform-origin:50% 0;-webkit-text-stroke:0.2px;">2</div>
<div style="position:absolute;left:30px;top:241px;width:25px;height:1px;background:#b2b6bc"></div>
<div class="t" style="left:39.3px;top:225.7px;font-size:13.30px;line-height:13.30px;color:#222;transform:scaleX(0.9);transform-origin:50% 0;-webkit-text-stroke:0.2px;">3</div>
<div style="position:absolute;left:30px;top:262px;width:25px;height:1px;background:#b2b6bc"></div>
<div class="t" style="left:39.3px;top:246.7px;font-size:13.30px;line-height:13.30px;color:#222;transform:scaleX(0.9);transform-origin:50% 0;-webkit-text-stroke:0.2px;">4</div>
<div style="position:absolute;left:30px;top:283px;width:25px;height:1px;background:#b2b6bc"></div>
<div class="t" style="left:39.3px;top:267.7px;font-size:13.30px;line-height:13.30px;color:#222;transform:scaleX(0.9);transform-origin:50% 0;-webkit-text-stroke:0.2px;">5</div>
<div style="position:absolute;left:30px;top:304px;width:25px;height:1px;background:#b2b6bc"></div>
<div class="t" style="left:39.3px;top:288.7px;font-size:13.30px;line-height:13.30px;color:#222;transform:scaleX(0.9);transform-origin:50% 0;-webkit-text-stroke:0.2px;">6</div>
<div style="position:absolute;left:30px;top:325px;width:25px;height:1px;background:#b2b6bc"></div>
<div class="t" style="left:39.3px;top:309.7px;font-size:13.30px;line-height:13.30px;color:#222;transform:scaleX(0.9);transform-origin:50% 0;-webkit-text-stroke:0.2px;">7</div>
<div style="position:absolute;left:30px;top:345px;width:25px;height:1px;background:#b2b6bc"></div>
<div class="t" style="left:39.3px;top:329.7px;font-size:13.30px;line-height:13.30px;color:#222;transform:scaleX(0.9);transform-origin:50% 0;-webkit-text-stroke:0.2px;">8</div>
<div style="position:absolute;left:30px;top:365px;width:25px;height:1px;background:#b2b6bc"></div>
<div class="t" style="left:39.3px;top:349.7px;font-size:13.30px;line-height:13.30px;color:#222;transform:scaleX(0.9);transform-origin:50% 0;-webkit-text-stroke:0.2px;">9</div>
<div style="position:absolute;left:30px;top:385px;width:25px;height:1px;background:#b2b6bc"></div>
<div class="t" style="left:35.6px;top:369.7px;font-size:13.30px;line-height:13.30px;color:#222;transform:scaleX(0.9);transform-origin:50% 0;-webkit-text-stroke:0.2px;">10</div>
<div style="position:absolute;left:30px;top:405px;width:25px;height:1px;background:#b2b6bc"></div>
<div class="t" style="left:36.1px;top:389.7px;font-size:13.30px;line-height:13.30px;color:#222;transform:scaleX(0.9);transform-origin:50% 0;-webkit-text-stroke:0.2px;">11</div>
<div style="position:absolute;left:30px;top:425px;width:25px;height:1px;background:#b2b6bc"></div>
<div class="t" style="left:35.6px;top:409.7px;font-size:13.30px;line-height:13.30px;color:#222;transform:scaleX(0.9);transform-origin:50% 0;-webkit-text-stroke:0.2px;">12</div>
<div style="position:absolute;left:30px;top:445px;width:25px;height:1px;background:#b2b6bc"></div>
<div class="t" style="left:35.6px;top:429.7px;font-size:13.30px;line-height:13.30px;color:#222;transform:scaleX(0.9);transform-origin:50% 0;-webkit-text-stroke:0.2px;">13</div>
<div style="position:absolute;left:30px;top:465px;width:25px;height:1px;background:#b2b6bc"></div>
<div class="t" style="left:35.6px;top:449.7px;font-size:13.30px;line-height:13.30px;color:#222;transform:scaleX(0.9);transform-origin:50% 0;-webkit-text-stroke:0.2px;">14</div>
<div style="position:absolute;left:30px;top:485px;width:25px;height:1px;background:#b2b6bc"></div>
<div class="t" style="left:35.6px;top:469.7px;font-size:13.30px;line-height:13.30px;color:#222;transform:scaleX(0.9);transform-origin:50% 0;-webkit-text-stroke:0.2px;">15</div>
<div style="position:absolute;left:30px;top:505px;width:25px;height:1px;background:#b2b6bc"></div>
<div class="t" style="left:35.6px;top:489.7px;font-size:13.30px;line-height:13.30px;color:#222;transform:scaleX(0.9);transform-origin:50% 0;-webkit-text-stroke:0.2px;">16</div>
<div style="position:absolute;left:30px;top:525px;width:25px;height:1px;background:#b2b6bc"></div>
<div class="t" style="left:35.6px;top:509.7px;font-size:13.30px;line-height:13.30px;color:#222;transform:scaleX(0.9);transform-origin:50% 0;-webkit-text-stroke:0.2px;">17</div>
<div style="position:absolute;left:30px;top:545px;width:25px;height:1px;background:#b2b6bc"></div>
<div class="t" style="left:35.6px;top:529.7px;font-size:13.30px;line-height:13.30px;color:#222;transform:scaleX(0.9);transform-origin:50% 0;-webkit-text-stroke:0.2px;">18</div>
<div style="position:absolute;left:30px;top:565px;width:25px;height:1px;background:#b2b6bc"></div>
<div class="t" style="left:35.6px;top:549.7px;font-size:13.30px;line-height:13.30px;color:#222;transform:scaleX(0.9);transform-origin:50% 0;-webkit-text-stroke:0.2px;">19</div>
<div style="position:absolute;left:30px;top:585px;width:25px;height:1px;background:#b2b6bc"></div>
<div class="t" style="left:35.6px;top:569.7px;font-size:13.30px;line-height:13.30px;color:#222;transform:scaleX(0.9);transform-origin:50% 0;-webkit-text-stroke:0.2px;">20</div>
<div style="position:absolute;left:30px;top:605px;width:25px;height:1px;background:#b2b6bc"></div>
<div class="t" style="left:35.6px;top:589.7px;font-size:13.30px;line-height:13.30px;color:#222;transform:scaleX(0.9);transform-origin:50% 0;-webkit-text-stroke:0.2px;">21</div>
<div style="position:absolute;left:30px;top:625px;width:25px;height:1px;background:#b2b6bc"></div>
<div class="t" style="left:35.6px;top:609.7px;font-size:13.30px;line-height:13.30px;color:#222;transform:scaleX(0.9);transform-origin:50% 0;-webkit-text-stroke:0.2px;">22</div>
<div style="position:absolute;left:30px;top:645px;width:25px;height:1px;background:#b2b6bc"></div>
<div class="t" style="left:35.6px;top:629.7px;font-size:13.30px;line-height:13.30px;color:#222;transform:scaleX(0.9);transform-origin:50% 0;-webkit-text-stroke:0.2px;">23</div>
<div style="position:absolute;left:30px;top:665px;width:25px;height:1px;background:#b2b6bc"></div>
<div class="t" style="left:35.6px;top:649.7px;font-size:13.30px;line-height:13.30px;color:#222;transform:scaleX(0.9);transform-origin:50% 0;-webkit-text-stroke:0.2px;">24</div>
<div style="position:absolute;left:30px;top:685px;width:25px;height:1px;background:#b2b6bc"></div>
<div class="t" style="left:35.6px;top:669.7px;font-size:13.30px;line-height:13.30px;color:#222;transform:scaleX(0.9);transform-origin:50% 0;-webkit-text-stroke:0.2px;">25</div>
<div style="position:absolute;left:30px;top:705px;width:25px;height:1px;background:#b2b6bc"></div>
<div class="t" style="left:35.6px;top:689.7px;font-size:13.30px;line-height:13.30px;color:#222;transform:scaleX(0.9);transform-origin:50% 0;-webkit-text-stroke:0.2px;">26</div>
<div style="position:absolute;left:30px;top:725px;width:25px;height:1px;background:#b2b6bc"></div>
<div class="t" style="left:35.6px;top:709.7px;font-size:13.30px;line-height:13.30px;color:#222;transform:scaleX(0.9);transform-origin:50% 0;-webkit-text-stroke:0.2px;">27</div>
<div style="position:absolute;left:30px;top:745px;width:25px;height:1px;background:#b2b6bc"></div>
<div class="t" style="left:35.6px;top:729.7px;font-size:13.30px;line-height:13.30px;color:#222;transform:scaleX(0.9);transform-origin:50% 0;-webkit-text-stroke:0.2px;">28</div>
<div style="position:absolute;left:30px;top:765px;width:25px;height:1px;background:#b2b6bc"></div>
<div class="t" style="left:35.6px;top:749.7px;font-size:13.30px;line-height:13.30px;color:#222;transform:scaleX(0.9);transform-origin:50% 0;-webkit-text-stroke:0.2px;">29</div>
<div style="position:absolute;left:30px;top:785px;width:25px;height:1px;background:#b2b6bc"></div>
<div class="t" style="left:35.6px;top:769.7px;font-size:13.30px;line-height:13.30px;color:#222;transform:scaleX(0.9);transform-origin:50% 0;-webkit-text-stroke:0.2px;">30</div>
<div style="position:absolute;left:30px;top:805px;width:25px;height:1px;background:#b2b6bc"></div>
<div class="t" style="left:35.6px;top:789.7px;font-size:13.30px;line-height:13.30px;color:#222;transform:scaleX(0.9);transform-origin:50% 0;-webkit-text-stroke:0.2px;">31</div>
<div style="position:absolute;left:30px;top:825px;width:25px;height:1px;background:#b2b6bc"></div>
<div class="t" style="left:35.6px;top:809.7px;font-size:13.30px;line-height:13.30px;color:#222;transform:scaleX(0.9);transform-origin:50% 0;-webkit-text-stroke:0.2px;">32</div>
<div style="position:absolute;left:30px;top:845px;width:25px;height:1px;background:#b2b6bc"></div>
<div class="t" style="left:35.6px;top:829.7px;font-size:13.30px;line-height:13.30px;color:#222;transform:scaleX(0.9);transform-origin:50% 0;-webkit-text-stroke:0.2px;">33</div>
<div style="position:absolute;left:30px;top:865px;width:25px;height:1px;background:#b2b6bc"></div>
<div class="t" style="left:35.6px;top:849.7px;font-size:13.30px;line-height:13.30px;color:#222;transform:scaleX(0.9);transform-origin:50% 0;-webkit-text-stroke:0.2px;">34</div>
<div style="position:absolute;left:56px;top:180px;width:346px;height:1px;background:#000"></div>
<div style="position:absolute;left:56px;top:180px;width:1px;height:20px;background:#000"></div>
<div style="position:absolute;left:401px;top:180px;width:2px;height:16px;background:#000"></div>
<div style="position:absolute;left:56px;top:198px;width:343px;height:2px;background:#000"></div>
<div style="position:absolute;left:400px;top:197px;width:5px;height:5px;background:#000;box-shadow:0 0 0 1px #fff"></div>
<div class="t" style="left:140.5px;top:184.0px;font-size:13.00px;line-height:13.00px;color:#000;font-weight:bold;">Установленные&#32;параметры</div>
<div class="t" style="left:58.4px;top:204.0px;font-size:14.20px;line-height:14.20px;color:#000;transform:scaleX(0.9679);transform-origin:0 0;-webkit-text-stroke:0.15px;">ЦФУ:</div>
<div class="t" style="left:319.5px;top:204.0px;font-size:14.20px;line-height:14.20px;color:#ff0000;transform:scaleX(0.8475);transform-origin:0 0;-webkit-text-stroke:0.15px;">Все</div>
<div class="t" style="left:58.4px;top:225.0px;font-size:14.20px;line-height:14.20px;color:#000;transform:scaleX(1.0195);transform-origin:0 0;-webkit-text-stroke:0.15px;">Группа&#32;продуктов:</div>
<div class="t" style="left:319.5px;top:225.0px;font-size:14.20px;line-height:14.20px;color:#ff0000;transform:scaleX(0.8475);transform-origin:0 0;-webkit-text-stroke:0.15px;">Все</div>
<div class="t" style="left:58.4px;top:246.0px;font-size:14.20px;line-height:14.20px;color:#000;transform:scaleX(1.0268);transform-origin:0 0;-webkit-text-stroke:0.15px;">Единая&#32;валюта:</div>
<div class="t" style="left:319.5px;top:246.0px;font-size:14.20px;line-height:14.20px;color:#ff0000;transform:scaleX(0.8044);transform-origin:0 0;-webkit-text-stroke:0.15px;">RUB</div>
<div class="t" style="left:58.4px;top:267.0px;font-size:14.20px;line-height:14.20px;color:#000;transform:scaleX(0.9924);transform-origin:0 0;-webkit-text-stroke:0.15px;">Валюта&#32;портфеля:</div>
<div class="t" style="left:319.5px;top:267.0px;font-size:14.20px;line-height:14.20px;color:#ff0000;transform:scaleX(0.9307);transform-origin:0 0;-webkit-text-stroke:0.15px;">Весь&#32;портфель</div>
<div class="t" style="left:58.4px;top:288.0px;font-size:14.20px;line-height:14.20px;color:#000;transform:scaleX(1.0453);transform-origin:0 0;-webkit-text-stroke:0.15px;">Признак&#32;ввода/вывода&#32;из&#32;портфеля:</div>
<div class="t" style="left:319.5px;top:288.0px;font-size:14.20px;line-height:14.20px;color:#ff0000;transform:scaleX(0.9393);transform-origin:0 0;-webkit-text-stroke:0.15px;">Все&#32;договора</div>
<div class="t" style="left:58.4px;top:309.0px;font-size:14.20px;line-height:14.20px;color:#000;transform:scaleX(1.0130);transform-origin:0 0;-webkit-text-stroke:0.15px;">Тип&#32;остатков:</div>
<div class="t" style="left:319.5px;top:309.0px;font-size:14.20px;line-height:14.20px;color:#ff0000;transform:scaleX(0.9494);transform-origin:0 0;-webkit-text-stroke:0.15px;">Общий&#32;остаток&#32;ОД</div>
<div class="t" style="left:58.4px;top:329.0px;font-size:14.20px;line-height:14.20px;color:#000;transform:scaleX(0.9624);transform-origin:0 0;-webkit-text-stroke:0.15px;">Тип&#32;клиента:</div>
<div class="t" style="left:319.5px;top:329.0px;font-size:14.20px;line-height:14.20px;color:#ff0000;transform:scaleX(0.9545);transform-origin:0 0;-webkit-text-stroke:0.15px;">Физические&#32;лица</div>
<div class="t" style="left:1062.2px;top:183.6px;font-size:13.52px;line-height:13.52px;color:#0000ff;">Вернуться&#32;на&#32;первую&#32;страницу</div>
<div style="position:absolute;left:1062px;top:196px;width:196px;height:1px;background:#0000ff"></div>
<div style="position:absolute;left:1049px;top:207px;width:224px;height:40px;box-sizing:border-box;border:2px solid #385d8a;border-radius:2px;background:#4f81bd"></div>
<div class="t" style="left:1085.5px;top:220.6px;font-size:13.41px;line-height:13.41px;color:#fff;">Обновить&#32;текущий&#32;лист</div>
<div class="t" style="left:1003.6px;top:267.0px;font-size:14.20px;line-height:14.20px;color:#ff0000;font-weight:bold;transform:scaleX(0.9266);transform-origin:0 0;">Примечание:</div>
<div class="t" style="left:1003.6px;top:288.5px;font-size:14.20px;line-height:14.20px;color:#000;transform:scaleX(0.9817);transform-origin:0 0;-webkit-text-stroke:0.15px;">Для&#32;корректной&#32;работы&#32;приложения&#32;необходимо&#32;разрешить&#32;исполнение&#32;макросов.</div>
<div class="t" style="left:1003.6px;top:309.5px;font-size:14.20px;line-height:14.20px;color:#000;transform:scaleX(0.9644);transform-origin:0 0;-webkit-text-stroke:0.15px;">(подробная&#32;инструкция&#32;на&#32;листе&#32;&quot;Описание&quot;)</div>
<div class="t" style="left:1132.6px;top:388.8px;font-size:14.20px;line-height:14.20px;color:#ff0000;transform:scaleX(0.9170);transform-origin:0 0;-webkit-text-stroke:0.15px;">ЦФУ:</div>
<div style="position:absolute;left:1134px;top:405px;width:257px;height:28px;box-sizing:border-box;border:1px solid #000;background:#fff"></div>
<div style="position:absolute;left:1363px;top:406px;width:27px;height:26px;box-sizing:border-box;border:1px solid;border-color:#fff #000 #000 #fff;background:#d4d0c8;box-shadow:inset -1px -1px 0 #808080"></div>
<svg style="left:1371px;top:416px" width="12" height="7"><path d="M0 0 H12 L6 6Z" fill="#000"/></svg>
<div class="t" style="left:1132.6px;top:448.6px;font-size:14.20px;line-height:14.20px;color:#ff0000;transform:scaleX(0.9786);transform-origin:0 0;-webkit-text-stroke:0.15px;">Группа&#32;продуктов:</div>
<div style="position:absolute;left:1135px;top:468px;width:257px;height:27px;box-sizing:border-box;border:1px solid #000;background:#fff"></div>
<div style="position:absolute;left:1364px;top:469px;width:27px;height:25px;box-sizing:border-box;border:1px solid;border-color:#fff #000 #000 #fff;background:#d4d0c8;box-shadow:inset -1px -1px 0 #808080"></div>
<svg style="left:1372px;top:478px" width="12" height="7"><path d="M0 0 H12 L6 6Z" fill="#000"/></svg>
<div class="t" style="left:1132.6px;top:508.8px;font-size:14.20px;line-height:14.20px;color:#ff0000;transform:scaleX(0.9212);transform-origin:0 0;-webkit-text-stroke:0.15px;">Единая&#32;валюта:</div>
<div style="position:absolute;left:1132px;top:526px;width:255px;height:26px;box-sizing:border-box;border:1px solid #000;background:#fff"></div>
<div style="position:absolute;left:1359px;top:527px;width:27px;height:24px;box-sizing:border-box;border:1px solid;border-color:#fff #000 #000 #fff;background:#d4d0c8;box-shadow:inset -1px -1px 0 #808080"></div>
<svg style="left:1367px;top:536px" width="12" height="7"><path d="M0 0 H12 L6 6Z" fill="#000"/></svg>
<div class="t" style="left:1132.6px;top:568.6px;font-size:14.20px;line-height:14.20px;color:#ff0000;transform:scaleX(0.9346);transform-origin:0 0;-webkit-text-stroke:0.15px;">Валюта&#32;портфеля:</div>
<div style="position:absolute;left:1135px;top:585px;width:254px;height:26px;box-sizing:border-box;border:1px solid #000;background:#fff"></div>
<div style="position:absolute;left:1361px;top:586px;width:27px;height:24px;box-sizing:border-box;border:1px solid;border-color:#fff #000 #000 #fff;background:#d4d0c8;box-shadow:inset -1px -1px 0 #808080"></div>
<svg style="left:1369px;top:595px" width="12" height="7"><path d="M0 0 H12 L6 6Z" fill="#000"/></svg>
<div class="t" style="left:1132.6px;top:628.8px;font-size:14.20px;line-height:14.20px;color:#ff0000;transform:scaleX(0.9561);transform-origin:0 0;-webkit-text-stroke:0.15px;">Признак&#32;ввода/вывода&#32;из&#32;портфеля:</div>
<div style="position:absolute;left:1132px;top:648px;width:255px;height:26px;box-sizing:border-box;border:1px solid #000;background:#fff"></div>
<div style="position:absolute;left:1359px;top:649px;width:27px;height:24px;box-sizing:border-box;border:1px solid;border-color:#fff #000 #000 #fff;background:#d4d0c8;box-shadow:inset -1px -1px 0 #808080"></div>
<svg style="left:1367px;top:658px" width="12" height="7"><path d="M0 0 H12 L6 6Z" fill="#000"/></svg>
<div class="t" style="left:1132.6px;top:688.6px;font-size:14.20px;line-height:14.20px;color:#ff0000;transform:scaleX(0.9431);transform-origin:0 0;-webkit-text-stroke:0.15px;">Тип&#32;остатков:</div>
<div style="position:absolute;left:1134px;top:708px;width:255px;height:26px;box-sizing:border-box;border:1px solid #000;background:#fff"></div>
<div style="position:absolute;left:1361px;top:709px;width:27px;height:24px;box-sizing:border-box;border:1px solid;border-color:#fff #000 #000 #fff;background:#d4d0c8;box-shadow:inset -1px -1px 0 #808080"></div>
<svg style="left:1369px;top:718px" width="12" height="7"><path d="M0 0 H12 L6 6Z" fill="#000"/></svg>
<div class="t" style="left:1132.6px;top:748.7px;font-size:14.20px;line-height:14.20px;color:#ff0000;transform:scaleX(0.9588);transform-origin:0 0;-webkit-text-stroke:0.15px;">Тип&#32;клиента:</div>
<div style="position:absolute;left:1134px;top:765px;width:256px;height:28px;box-sizing:border-box;border:1px solid #000;background:#fff"></div>
<div style="position:absolute;left:1362px;top:766px;width:27px;height:26px;box-sizing:border-box;border:1px solid;border-color:#fff #000 #000 #fff;background:#d4d0c8;box-shadow:inset -1px -1px 0 #808080"></div>
<svg style="left:1370px;top:776px" width="12" height="7"><path d="M0 0 H12 L6 6Z" fill="#000"/></svg>
<div class="t" style="left:1138.9px;top:774.9px;font-size:10.78px;line-height:10.78px;color:#000;">Физические&#32;лица</div>
<svg style="left:0;top:0" width="1556" height="848" font-family="Liberation Sans">
<rect x="140" y="402" width="706" height="1" fill="#868686"/>
<rect x="140" y="461" width="706" height="1" fill="#868686"/>
<rect x="140" y="520" width="706" height="1" fill="#868686"/>
<rect x="140" y="579" width="706" height="1" fill="#868686"/>
<rect x="140" y="637" width="706" height="1" fill="#868686"/>
<rect x="140" y="696" width="706" height="1" fill="#868686"/>
<rect x="140" y="755" width="706" height="1" fill="#868686"/>
<rect x="845" y="402" width="3" height="1" fill="#868686"/>
<rect x="845" y="441" width="3" height="1" fill="#868686"/>
<rect x="845" y="480" width="3" height="1" fill="#868686"/>
<rect x="845" y="520" width="3" height="1" fill="#868686"/>
<rect x="845" y="559" width="3" height="1" fill="#868686"/>
<rect x="845" y="598" width="3" height="1" fill="#868686"/>
<rect x="845" y="637" width="3" height="1" fill="#868686"/>
<rect x="845" y="677" width="3" height="1" fill="#868686"/>
<rect x="845" y="716" width="3" height="1" fill="#868686"/>
<rect x="845" y="755" width="3" height="1" fill="#868686"/>
<rect x="144" y="402" width="1" height="357" fill="#868686"/>
<rect x="846" y="402" width="1" height="354" fill="#868686"/>
<rect x="144" y="755" width="1" height="4" fill="#868686"/>
<rect x="149" y="755" width="1" height="4" fill="#868686"/>
<rect x="153" y="755" width="1" height="4" fill="#868686"/>
<rect x="157" y="755" width="1" height="4" fill="#868686"/>
<rect x="161" y="755" width="1" height="4" fill="#868686"/>
<rect x="165" y="755" width="1" height="4" fill="#868686"/>
<rect x="169" y="755" width="1" height="4" fill="#868686"/>
<rect x="173" y="755" width="1" height="4" fill="#868686"/>
<rect x="178" y="755" width="1" height="4" fill="#868686"/>
<rect x="182" y="755" width="1" height="4" fill="#868686"/>
<rect x="186" y="755" width="1" height="4" fill="#868686"/>
<rect x="190" y="755" width="1" height="4" fill="#868686"/>
<rect x="194" y="755" width="1" height="4" fill="#868686"/>
<rect x="198" y="755" width="1" height="4" fill="#868686"/>
<rect x="202" y="755" width="1" height="4" fill="#868686"/>
<rect x="207" y="755" width="1" height="4" fill="#868686"/>
<rect x="211" y="755" width="1" height="4" fill="#868686"/>
<rect x="215" y="755" width="1" height="4" fill="#868686"/>
<rect x="219" y="755" width="1" height="4" fill="#868686"/>
<rect x="223" y="755" width="1" height="4" fill="#868686"/>
<rect x="227" y="755" width="1" height="4" fill="#868686"/>
<rect x="231" y="755" width="1" height="4" fill="#868686"/>
<rect x="236" y="755" width="1" height="4" fill="#868686"/>
<rect x="240" y="755" width="1" height="4" fill="#868686"/>
<rect x="244" y="755" width="1" height="4" fill="#868686"/>
<rect x="248" y="755" width="1" height="4" fill="#868686"/>
<rect x="252" y="755" width="1" height="4" fill="#868686"/>
<rect x="256" y="755" width="1" height="4" fill="#868686"/>
<rect x="260" y="755" width="1" height="4" fill="#868686"/>
<rect x="265" y="755" width="1" height="4" fill="#868686"/>
<rect x="269" y="755" width="1" height="4" fill="#868686"/>
<rect x="273" y="755" width="1" height="4" fill="#868686"/>
<rect x="277" y="755" width="1" height="4" fill="#868686"/>
<rect x="281" y="755" width="1" height="4" fill="#868686"/>
<rect x="285" y="755" width="1" height="4" fill="#868686"/>
<rect x="289" y="755" width="1" height="4" fill="#868686"/>
<rect x="294" y="755" width="1" height="4" fill="#868686"/>
<rect x="298" y="755" width="1" height="4" fill="#868686"/>
<rect x="302" y="755" width="1" height="4" fill="#868686"/>
<rect x="306" y="755" width="1" height="4" fill="#868686"/>
<rect x="310" y="755" width="1" height="4" fill="#868686"/>
<rect x="314" y="755" width="1" height="4" fill="#868686"/>
<rect x="318" y="755" width="1" height="4" fill="#868686"/>
<rect x="323" y="755" width="1" height="4" fill="#868686"/>
<rect x="327" y="755" width="1" height="4" fill="#868686"/>
<rect x="331" y="755" width="1" height="4" fill="#868686"/>
<rect x="335" y="755" width="1" height="4" fill="#868686"/>
<rect x="339" y="755" width="1" height="4" fill="#868686"/>
<rect x="343" y="755" width="1" height="4" fill="#868686"/>
<rect x="348" y="755" width="1" height="4" fill="#868686"/>
<rect x="352" y="755" width="1" height="4" fill="#868686"/>
<rect x="356" y="755" width="1" height="4" fill="#868686"/>
<rect x="360" y="755" width="1" height="4" fill="#868686"/>
<rect x="364" y="755" width="1" height="4" fill="#868686"/>
<rect x="368" y="755" width="1" height="4" fill="#868686"/>
<rect x="372" y="755" width="1" height="4" fill="#868686"/>
<rect x="377" y="755" width="1" height="4" fill="#868686"/>
<rect x="381" y="755" width="1" height="4" fill="#868686"/>
<rect x="385" y="755" width="1" height="4" fill="#868686"/>
<rect x="389" y="755" width="1" height="4" fill="#868686"/>
<rect x="393" y="755" width="1" height="4" fill="#868686"/>
<rect x="397" y="755" width="1" height="4" fill="#868686"/>
<rect x="401" y="755" width="1" height="4" fill="#868686"/>
<rect x="406" y="755" width="1" height="4" fill="#868686"/>
<rect x="410" y="755" width="1" height="4" fill="#868686"/>
<rect x="414" y="755" width="1" height="4" fill="#868686"/>
<rect x="418" y="755" width="1" height="4" fill="#868686"/>
<rect x="422" y="755" width="1" height="4" fill="#868686"/>
<rect x="426" y="755" width="1" height="4" fill="#868686"/>
<rect x="430" y="755" width="1" height="4" fill="#868686"/>
<rect x="435" y="755" width="1" height="4" fill="#868686"/>
<rect x="439" y="755" width="1" height="4" fill="#868686"/>
<rect x="443" y="755" width="1" height="4" fill="#868686"/>
<rect x="447" y="755" width="1" height="4" fill="#868686"/>
<rect x="451" y="755" width="1" height="4" fill="#868686"/>
<rect x="455" y="755" width="1" height="4" fill="#868686"/>
<rect x="459" y="755" width="1" height="4" fill="#868686"/>
<rect x="464" y="755" width="1" height="4" fill="#868686"/>
<rect x="468" y="755" width="1" height="4" fill="#868686"/>
<rect x="472" y="755" width="1" height="4" fill="#868686"/>
<rect x="476" y="755" width="1" height="4" fill="#868686"/>
<rect x="480" y="755" width="1" height="4" fill="#868686"/>
<rect x="484" y="755" width="1" height="4" fill="#868686"/>
<rect x="488" y="755" width="1" height="4" fill="#868686"/>
<rect x="493" y="755" width="1" height="4" fill="#868686"/>
<rect x="497" y="755" width="1" height="4" fill="#868686"/>
<rect x="501" y="755" width="1" height="4" fill="#868686"/>
<rect x="505" y="755" width="1" height="4" fill="#868686"/>
<rect x="509" y="755" width="1" height="4" fill="#868686"/>
<rect x="513" y="755" width="1" height="4" fill="#868686"/>
<rect x="517" y="755" width="1" height="4" fill="#868686"/>
<rect x="522" y="755" width="1" height="4" fill="#868686"/>
<rect x="526" y="755" width="1" height="4" fill="#868686"/>
<rect x="530" y="755" width="1" height="4" fill="#868686"/>
<rect x="534" y="755" width="1" height="4" fill="#868686"/>
<rect x="538" y="755" width="1" height="4" fill="#868686"/>
<rect x="542" y="755" width="1" height="4" fill="#868686"/>
<rect x="546" y="755" width="1" height="4" fill="#868686"/>
<rect x="551" y="755" width="1" height="4" fill="#868686"/>
<rect x="555" y="755" width="1" height="4" fill="#868686"/>
<rect x="559" y="755" width="1" height="4" fill="#868686"/>
<rect x="563" y="755" width="1" height="4" fill="#868686"/>
<rect x="567" y="755" width="1" height="4" fill="#868686"/>
<rect x="571" y="755" width="1" height="4" fill="#868686"/>
<rect x="575" y="755" width="1" height="4" fill="#868686"/>
<rect x="580" y="755" width="1" height="4" fill="#868686"/>
<rect x="584" y="755" width="1" height="4" fill="#868686"/>
<rect x="588" y="755" width="1" height="4" fill="#868686"/>
<rect x="592" y="755" width="1" height="4" fill="#868686"/>
<rect x="596" y="755" width="1" height="4" fill="#868686"/>
<rect x="600" y="755" width="1" height="4" fill="#868686"/>
<rect x="604" y="755" width="1" height="4" fill="#868686"/>
<rect x="609" y="755" width="1" height="4" fill="#868686"/>
<rect x="613" y="755" width="1" height="4" fill="#868686"/>
<rect x="617" y="755" width="1" height="4" fill="#868686"/>
<rect x="621" y="755" width="1" height="4" fill="#868686"/>
<rect x="625" y="755" width="1" height="4" fill="#868686"/>
<rect x="629" y="755" width="1" height="4" fill="#868686"/>
<rect x="634" y="755" width="1" height="4" fill="#868686"/>
<rect x="638" y="755" width="1" height="4" fill="#868686"/>
<rect x="642" y="755" width="1" height="4" fill="#868686"/>
<rect x="646" y="755" width="1" height="4" fill="#868686"/>
<rect x="650" y="755" width="1" height="4" fill="#868686"/>
<rect x="654" y="755" width="1" height="4" fill="#868686"/>
<rect x="658" y="755" width="1" height="4" fill="#868686"/>
<rect x="663" y="755" width="1" height="4" fill="#868686"/>
<rect x="667" y="755" width="1" height="4" fill="#868686"/>
<rect x="671" y="755" width="1" height="4" fill="#868686"/>
<rect x="675" y="755" width="1" height="4" fill="#868686"/>
<rect x="679" y="755" width="1" height="4" fill="#868686"/>
<rect x="683" y="755" width="1" height="4" fill="#868686"/>
<rect x="687" y="755" width="1" height="4" fill="#868686"/>
<rect x="692" y="755" width="1" height="4" fill="#868686"/>
<rect x="696" y="755" width="1" height="4" fill="#868686"/>
<rect x="700" y="755" width="1" height="4" fill="#868686"/>
<rect x="704" y="755" width="1" height="4" fill="#868686"/>
<rect x="708" y="755" width="1" height="4" fill="#868686"/>
<rect x="712" y="755" width="1" height="4" fill="#868686"/>
<rect x="716" y="755" width="1" height="4" fill="#868686"/>
<rect x="721" y="755" width="1" height="4" fill="#868686"/>
<rect x="725" y="755" width="1" height="4" fill="#868686"/>
<rect x="729" y="755" width="1" height="4" fill="#868686"/>
<rect x="733" y="755" width="1" height="4" fill="#868686"/>
<rect x="737" y="755" width="1" height="4" fill="#868686"/>
<rect x="741" y="755" width="1" height="4" fill="#868686"/>
<rect x="745" y="755" width="1" height="4" fill="#868686"/>
<rect x="750" y="755" width="1" height="4" fill="#868686"/>
<rect x="754" y="755" width="1" height="4" fill="#868686"/>
<rect x="758" y="755" width="1" height="4" fill="#868686"/>
<rect x="762" y="755" width="1" height="4" fill="#868686"/>
<rect x="766" y="755" width="1" height="4" fill="#868686"/>
<rect x="770" y="755" width="1" height="4" fill="#868686"/>
<rect x="774" y="755" width="1" height="4" fill="#868686"/>
<rect x="779" y="755" width="1" height="4" fill="#868686"/>
<rect x="783" y="755" width="1" height="4" fill="#868686"/>
<rect x="787" y="755" width="1" height="4" fill="#868686"/>
<rect x="791" y="755" width="1" height="4" fill="#868686"/>
<rect x="795" y="755" width="1" height="4" fill="#868686"/>
<rect x="799" y="755" width="1" height="4" fill="#868686"/>
<rect x="803" y="755" width="1" height="4" fill="#868686"/>
<rect x="808" y="755" width="1" height="4" fill="#868686"/>
<rect x="812" y="755" width="1" height="4" fill="#868686"/>
<rect x="816" y="755" width="1" height="4" fill="#868686"/>
<rect x="820" y="755" width="1" height="4" fill="#868686"/>
<rect x="824" y="755" width="1" height="4" fill="#868686"/>
<rect x="828" y="755" width="1" height="4" fill="#868686"/>
<rect x="832" y="755" width="1" height="4" fill="#868686"/>
<rect x="837" y="755" width="1" height="4" fill="#868686"/>
<rect x="841" y="755" width="1" height="4" fill="#868686"/>
<rect x="845" y="755" width="1" height="4" fill="#868686"/>
<path d="M144.2 646.2 L150.4 646.2 L158.9 641.9 L166.4 637.4 L173.0 634.3 L179.6 635.5 L183.4 634.9 L190.9 631.1 L198.5 627.4 L206.0 622.3 L211.7 616.6 L223.0 610.4 L234.3 601.9 L247.5 590.6 L260.8 580.2 L272.1 571.7 L276.8 562.3 L283.4 554.7 L289.0 550.6 L294.7 555.7 L302.3 553.2 L309.8 546.2 L317.4 543.4 L324.0 544.7 L331.5 539.6 L340.0 541.5 L347.5 536.0 L355.1 530.9 L360.8 528.1 L368.3 529.4 L374.0 528.1 L385.3 530.4 L390.9 528.1 L397.5 530.4 L406.0 528.1 L415.5 524.7 L423.0 520.0 L430.6 512.5 L438.1 506.8 L447.5 500.2 L455.1 491.7 L462.6 486.0 L470.2 482.3 L479.6 476.2 L489.0 468.1 L494.7 458.7 L504.2 449.2 L509.8 440.8 L513.6 437.4 L518.3 439.8 L522.1 445.5 L528.7 445.1 L536.2 445.5 L540.0 445.5 L542.8 444.2 L547.5 446.4 L554.2 448.3 L559.8 452.5 L563.6 452.5 L571.1 455.8 L579.6 457.2 L588.1 454.5 L592.8 456.2 L596.6 453.6 L600.4 454.0 L605.1 457.4 L608.9 457.7 L613.6 460.6 L618.3 461.9 L629.6 470.6 L636.2 472.5 L641.9 474.7 L647.5 475.7 L658.9 481.9 L663.6 485.1 L670.2 487.4 L675.8 487.4 L687.2 491.3 L690.9 491.7 L699.4 495.8 L708.2 497.5 L713.4 498.0 L720.6 501.1 L724.7 502.1 L737.0 507.2 L744.2 509.3 L753.5 513.4 L769.9 517.5 L778.1 519.3 L784.3 519.9 L787.4 521.1 L792.5 524.2 L798.7 524.4 L803.9 526.8 L823.4 531.2 L831.6 536.0 L845.0 538.6" fill="none" stroke="#ff0000" stroke-width="3.6" stroke-linejoin="round" stroke-linecap="round"/>
<path d="M144.2 585.3 L149.4 585.3 L162.6 580.2 L168.3 580.2 L174.0 577.4 L183.4 577.4 L189.0 575.1 L198.5 570.2 L207.9 566.4 L215.5 562.3 L221.1 561.9 L228.7 558.9 L238.1 552.8 L243.8 550.6 L253.2 543.8 L270.2 534.9 L279.6 528.3 L289.0 520.8 L294.7 520.2 L304.2 515.1 L314.5 510.4 L326.8 507.5 L336.2 502.8 L340.0 502.1 L347.5 498.9 L357.0 496.4 L364.5 496.4 L370.2 495.1 L377.7 495.1 L381.5 493.6 L385.3 494.5 L396.6 492.6 L402.3 493.6 L407.9 493.2 L415.5 491.3 L421.1 491.1 L430.6 486.4 L436.2 486.4 L447.5 483.6 L453.2 480.4 L460.8 478.1 L468.3 473.4 L483.4 465.7 L489.0 461.5 L494.7 458.7 L502.3 454.9 L507.9 450.8 L517.4 446.4 L524.9 448.3 L531.5 448.3 L536.2 451.1 L540.0 452.5 L542.8 451.1 L555.1 457.7 L559.8 458.7 L565.5 463.0 L571.1 465.3 L576.8 469.1 L588.1 471.3 L596.6 475.7 L602.3 480.0 L617.4 487.0 L622.1 489.8 L637.2 495.5 L647.5 497.9 L655.1 501.1 L672.1 504.9 L683.4 507.7 L689.1 510.2 L698.5 512.5 L704.1 512.7 L710.3 515.5 L716.5 515.8 L727.8 518.9 L732.9 518.9 L748.3 522.4 L755.5 522.4 L765.8 524.7 L769.9 524.9 L790.5 529.6 L795.6 531.4 L799.7 530.4 L806.9 531.6 L815.2 533.7 L820.3 533.7 L824.4 534.5 L828.5 533.3 L833.7 534.5 L845.0 534.3" fill="none" stroke="#0000ff" stroke-width="3.6" stroke-linejoin="round" stroke-linecap="round"/>
<rect x="166" y="706" width="216" height="46" fill="#999" opacity="0.75" filter="url(#sh)"/>
<defs><filter id="sh" x="-10%" y="-20%" width="120%" height="150%"><feGaussianBlur stdDeviation="1.6"/></filter></defs>
<rect x="163.5" y="702.5" width="215.5" height="47" fill="#fff" stroke="#4f81bd" stroke-width="1"/>
<path d="M194 714.5 H219" stroke="#ff0000" stroke-width="3.5" stroke-linecap="round"/>
<path d="M194 737.5 H219" stroke="#0000ff" stroke-width="3.5" stroke-linecap="round"/>
</svg>
<div class="t" style="left:222.3px;top:707.8px;font-size:12.01px;line-height:12.01px;color:#000;">Общий&#32;остаток&#32;ОД</div>
<div class="t" style="left:222.3px;top:730.7px;font-size:12.17px;line-height:12.17px;color:#000;">Количество&#32;договоров</div>
<svg style="left:0;top:0" width="1556" height="848" font-family="Liberation Sans">
<polygon points="97.3,401.0 97.3,403.8 94.4,405.6 91.3,406.8 88.0,407.3 84.8,406.6 81.4,405.8 78.6,403.8 79.3,401.0 80.6,398.8 81.6,396.4 84.5,394.8 88.0,394.3 91.7,394.6 94.1,396.6 95.2,398.8" fill="#c0c0c0"/>
<polygon points="95.8,461.5 96.3,464.4 94.5,467.0 90.9,467.5 88.0,467.8 84.7,468.2 81.9,466.6 80.1,464.3 79.2,461.5 80.9,459.0 82.8,457.1 84.6,454.5 88.0,453.8 91.1,455.2 93.7,456.7 95.4,458.9" fill="#c0c0c0"/>
<polygon points="96.2,521.0 95.8,524.6 93.5,527.2 91.0,529.2 88.0,529.4 85.3,528.4 82.1,527.7 79.9,524.8 80.6,521.0 81.4,517.9 82.5,514.8 85.0,512.9 88.0,511.8 91.2,512.2 93.1,515.2 94.3,518.0" fill="#c0c0c0"/>
<polygon points="94.3,579.0 93.6,581.6 92.8,584.4 90.1,586.1 87.0,585.3 84.4,584.9 81.5,584.2 79.8,581.8 79.3,579.0 79.8,576.2 82.2,574.5 84.4,573.1 87.0,571.3 90.1,571.9 92.1,574.3 93.7,576.4" fill="#c0c0c0"/>
<polygon points="96.1,637.0 96.3,639.4 94.7,641.7 91.1,642.2 88.0,642.3 84.7,642.7 81.7,641.5 80.0,639.3 79.1,637.0 80.6,634.8 82.7,633.2 84.6,631.1 88.0,630.3 91.2,631.6 93.7,633.0 95.7,634.7" fill="#c0c0c0"/>
<polygon points="100.5,696.0 100.7,698.6 98.8,700.7 96.2,702.3 93.0,702.7 90.3,701.3 87.7,700.3 84.8,698.8 84.5,696.0 86.0,693.6 87.5,691.5 90.1,690.3 93.0,689.7 96.4,689.3 99.1,691.1 99.6,693.8" fill="#c0c0c0"/>
<polygon points="859.9,401.7 859.6,404.2 858.2,406.2 856.3,407.8 854.0,407.7 852.1,406.8 849.7,406.3 848.0,404.4 848.3,401.7 848.9,399.4 850.0,397.3 851.9,396.2 854.0,395.1 856.5,395.2 857.9,397.4 858.7,399.6" fill="#c0c0c0"/>
<polygon points="860.6,440.0 860.1,442.5 858.7,444.6 856.8,446.0 854.5,445.7 852.5,445.3 850.0,444.9 848.7,442.6 849.0,440.0 849.4,437.7 850.5,435.6 852.3,434.3 854.5,433.1 856.9,433.7 858.2,436.0 859.4,437.8" fill="#c0c0c0"/>
<polygon points="860.0,481.0 860.5,483.7 858.9,485.8 856.5,486.3 854.5,486.9 852.3,486.9 850.4,485.5 848.8,483.6 848.4,481.0 849.7,478.9 850.7,476.9 852.1,474.7 854.5,474.3 856.7,475.3 858.6,476.6 859.5,478.8" fill="#c0c0c0"/>
<polygon points="859.6,520.0 859.9,522.7 858.2,524.6 856.2,525.8 854.0,526.2 852.0,525.3 850.0,524.4 847.9,522.7 848.0,520.0 849.2,517.8 850.0,515.7 851.8,514.1 854.0,513.6 856.4,513.7 858.2,515.5 858.6,517.9" fill="#c0c0c0"/>
<polygon points="859.0,558.0 859.2,560.5 857.7,562.6 855.8,564.1 853.5,564.4 851.5,563.1 849.6,562.3 847.5,560.7 847.4,558.0 848.4,555.7 849.5,553.6 851.4,552.4 853.5,551.8 856.0,551.5 857.8,553.4 858.2,555.9" fill="#c0c0c0"/>
<polygon points="861.0,598.5 860.5,601.0 859.4,603.3 857.1,604.1 855.0,604.0 852.7,604.5 850.4,603.5 849.7,600.9 849.4,598.5 849.8,596.1 851.2,594.3 852.7,592.4 855.0,591.4 857.1,592.9 858.6,594.6 860.4,596.1" fill="#c0c0c0"/>
<polygon points="860.9,636.5 860.5,639.0 859.4,641.3 857.1,642.0 855.0,642.0 852.7,642.6 850.5,641.4 849.7,638.9 849.3,636.5 849.8,634.2 851.2,632.4 852.7,630.3 855.0,629.4 857.1,631.0 858.7,632.5 860.4,634.1" fill="#c0c0c0"/>
<polygon points="862.6,678.0 861.6,680.5 859.6,682.0 858.1,683.6 856.0,684.5 853.8,683.9 851.6,682.8 850.5,680.5 851.0,678.0 850.9,675.7 851.4,673.1 853.7,671.9 856.0,671.9 858.2,672.3 859.8,673.9 861.2,675.7" fill="#c0c0c0"/>
<polygon points="862.0,716.0 861.2,718.6 859.3,720.1 857.6,721.6 855.5,722.1 853.3,721.7 851.0,720.9 849.9,718.5 850.4,716.0 850.5,713.7 851.1,711.2 853.2,710.0 855.5,709.5 857.8,710.1 859.2,712.0 860.6,713.7" fill="#c0c0c0"/>
</svg>
<div class="t" style="left:96.0px;top:396.5px;font-size:11.67px;line-height:11.67px;color:#000;">30&#32;000</div>
<div class="t" style="left:96.0px;top:455.5px;font-size:11.67px;line-height:11.67px;color:#000;">25&#32;000</div>
<div class="t" style="left:96.0px;top:514.5px;font-size:11.67px;line-height:11.67px;color:#000;">20&#32;000</div>
<div class="t" style="left:96.0px;top:573.5px;font-size:11.67px;line-height:11.67px;color:#000;">15&#32;000</div>
<div class="t" style="left:96.0px;top:631.5px;font-size:11.67px;line-height:11.67px;color:#000;">10&#32;000</div>
<div class="t" style="left:102.5px;top:690.5px;font-size:11.67px;line-height:11.67px;color:#000;">5&#32;000</div>
<div class="t" style="left:125.2px;top:749.5px;font-size:11.67px;line-height:11.67px;color:#000;">0</div>
<div class="t" style="left:859.7px;top:396.9px;font-size:11.51px;line-height:11.51px;color:#000;">90</div>
<div class="t" style="left:859.7px;top:436.1px;font-size:11.51px;line-height:11.51px;color:#000;">80</div>
<div class="t" style="left:859.7px;top:475.3px;font-size:11.51px;line-height:11.51px;color:#000;">70</div>
<div class="t" style="left:859.7px;top:514.5px;font-size:11.51px;line-height:11.51px;color:#000;">60</div>
<div class="t" style="left:859.7px;top:553.7px;font-size:11.51px;line-height:11.51px;color:#000;">50</div>
<div class="t" style="left:859.7px;top:593.0px;font-size:11.51px;line-height:11.51px;color:#000;">40</div>
<div class="t" style="left:859.7px;top:632.2px;font-size:11.51px;line-height:11.51px;color:#000;">30</div>
<div class="t" style="left:859.7px;top:671.4px;font-size:11.51px;line-height:11.51px;color:#000;">20</div>
<div class="t" style="left:859.7px;top:710.6px;font-size:11.51px;line-height:11.51px;color:#000;">10</div>
<div class="t" style="left:859.7px;top:749.7px;font-size:11.69px;line-height:11.69px;color:#000;">0</div>
<div class="t" style="left:312.3px;top:367.1px;font-size:16.47px;line-height:16.47px;color:#000;font-weight:bold;">Динамика&#32;розничного&#32;кредитного&#32;портфеля</div>
<div class="t" style="left:436.0px;top:825.8px;font-size:11.42px;line-height:11.42px;color:#000;font-weight:bold;">Дата&#32;начала&#32;&#32;недели</div>
<svg style="left:0;top:0" width="1556" height="848" font-family="Liberation Sans">
<text transform="translate(79.6 660) rotate(-90)" font-size="14.3" font-weight="bold" fill="#ff0000" textLength="204.5" lengthAdjust="spacingAndGlyphs" style="white-space:pre">Общий остаток ОД,  млн. RUB</text>
<text transform="translate(898.8 661.8) rotate(-90)" font-size="13.7" font-weight="bold" fill="#0000ff" textLength="205" lengthAdjust="spacingAndGlyphs">Количество кредитов, тыс. шт</text>
<text transform="translate(148.2 809) rotate(-90)" font-size="9.9" fill="#000" stroke="#000" stroke-width="0.12" textLength="48" lengthAdjust="spacingAndGlyphs">01.01.2007</text>
<text transform="translate(160.6 809) rotate(-90)" font-size="9.9" fill="#000" stroke="#000" stroke-width="0.12" textLength="48" lengthAdjust="spacingAndGlyphs">22.01.2007</text>
<text transform="translate(173.1 809) rotate(-90)" font-size="9.9" fill="#000" stroke="#000" stroke-width="0.12" textLength="48" lengthAdjust="spacingAndGlyphs">12.02.2007</text>
<text transform="translate(185.5 809) rotate(-90)" font-size="9.9" fill="#000" stroke="#000" stroke-width="0.12" textLength="48" lengthAdjust="spacingAndGlyphs">05.03.2007</text>
<text transform="translate(197.9 809) rotate(-90)" font-size="9.9" fill="#000" stroke="#000" stroke-width="0.12" textLength="48" lengthAdjust="spacingAndGlyphs">26.03.2007</text>
<text transform="translate(210.4 809) rotate(-90)" font-size="9.9" fill="#000" stroke="#000" stroke-width="0.12" textLength="48" lengthAdjust="spacingAndGlyphs">16.04.2007</text>
<text transform="translate(222.8 809) rotate(-90)" font-size="9.9" fill="#000" stroke="#000" stroke-width="0.12" textLength="48" lengthAdjust="spacingAndGlyphs">07.05.2007</text>
<text transform="translate(235.2 809) rotate(-90)" font-size="9.9" fill="#000" stroke="#000" stroke-width="0.12" textLength="48" lengthAdjust="spacingAndGlyphs">28.05.2007</text>
<text transform="translate(247.7 809) rotate(-90)" font-size="9.9" fill="#000" stroke="#000" stroke-width="0.12" textLength="48" lengthAdjust="spacingAndGlyphs">18.06.2007</text>
<text transform="translate(260.1 809) rotate(-90)" font-size="9.9" fill="#000" stroke="#000" stroke-width="0.12" textLength="48" lengthAdjust="spacingAndGlyphs">09.07.2007</text>
<text transform="translate(272.6 809) rotate(-90)" font-size="9.9" fill="#000" stroke="#000" stroke-width="0.12" textLength="48" lengthAdjust="spacingAndGlyphs">30.07.2007</text>
<text transform="translate(285.0 809) rotate(-90)" font-size="9.9" fill="#000" stroke="#000" stroke-width="0.12" textLength="48" lengthAdjust="spacingAndGlyphs">20.08.2007</text>
<text transform="translate(297.4 809) rotate(-90)" font-size="9.9" fill="#000" stroke="#000" stroke-width="0.12" textLength="48" lengthAdjust="spacingAndGlyphs">10.09.2007</text>
<text transform="translate(309.9 809) rotate(-90)" font-size="9.9" fill="#000" stroke="#000" stroke-width="0.12" textLength="48" lengthAdjust="spacingAndGlyphs">01.10.2007</text>
<text transform="translate(322.3 809) rotate(-90)" font-size="9.9" fill="#000" stroke="#000" stroke-width="0.12" textLength="48" lengthAdjust="spacingAndGlyphs">22.10.2007</text>
<text transform="translate(334.7 809) rotate(-90)" font-size="9.9" fill="#000" stroke="#000" stroke-width="0.12" textLength="48" lengthAdjust="spacingAndGlyphs">12.11.2007</text>
<text transform="translate(347.2 809) rotate(-90)" font-size="9.9" fill="#000" stroke="#000" stroke-width="0.12" textLength="48" lengthAdjust="spacingAndGlyphs">03.12.2007</text>
<text transform="translate(359.6 809) rotate(-90)" font-size="9.9" fill="#000" stroke="#000" stroke-width="0.12" textLength="48" lengthAdjust="spacingAndGlyphs">24.12.2007</text>
<text transform="translate(372.0 809) rotate(-90)" font-size="9.9" fill="#000" stroke="#000" stroke-width="0.12" textLength="48" lengthAdjust="spacingAndGlyphs">14.01.2008</text>
<text transform="translate(384.5 809) rotate(-90)" font-size="9.9" fill="#000" stroke="#000" stroke-width="0.12" textLength="48" lengthAdjust="spacingAndGlyphs">04.02.2008</text>
<text transform="translate(396.9 809) rotate(-90)" font-size="9.9" fill="#000" stroke="#000" stroke-width="0.12" textLength="48" lengthAdjust="spacingAndGlyphs">25.02.2008</text>
<text transform="translate(409.3 809) rotate(-90)" font-size="9.9" fill="#000" stroke="#000" stroke-width="0.12" textLength="48" lengthAdjust="spacingAndGlyphs">17.03.2008</text>
<text transform="translate(421.8 809) rotate(-90)" font-size="9.9" fill="#000" stroke="#000" stroke-width="0.12" textLength="48" lengthAdjust="spacingAndGlyphs">07.04.2008</text>
<text transform="translate(434.2 809) rotate(-90)" font-size="9.9" fill="#000" stroke="#000" stroke-width="0.12" textLength="48" lengthAdjust="spacingAndGlyphs">28.04.2008</text>
<text transform="translate(446.6 809) rotate(-90)" font-size="9.9" fill="#000" stroke="#000" stroke-width="0.12" textLength="48" lengthAdjust="spacingAndGlyphs">19.05.2008</text>
<text transform="translate(459.1 809) rotate(-90)" font-size="9.9" fill="#000" stroke="#000" stroke-width="0.12" textLength="48" lengthAdjust="spacingAndGlyphs">09.06.2008</text>
<text transform="translate(471.5 809) rotate(-90)" font-size="9.9" fill="#000" stroke="#000" stroke-width="0.12" textLength="48" lengthAdjust="spacingAndGlyphs">30.06.2008</text>
<text transform="translate(483.9 809) rotate(-90)" font-size="9.9" fill="#000" stroke="#000" stroke-width="0.12" textLength="48" lengthAdjust="spacingAndGlyphs">21.07.2008</text>
<text transform="translate(496.4 809) rotate(-90)" font-size="9.9" fill="#000" stroke="#000" stroke-width="0.12" textLength="48" lengthAdjust="spacingAndGlyphs">11.08.2008</text>
<text transform="translate(508.8 809) rotate(-90)" font-size="9.9" fill="#000" stroke="#000" stroke-width="0.12" textLength="48" lengthAdjust="spacingAndGlyphs">01.09.2008</text>
<text transform="translate(521.2 809) rotate(-90)" font-size="9.9" fill="#000" stroke="#000" stroke-width="0.12" textLength="48" lengthAdjust="spacingAndGlyphs">22.09.2008</text>
<text transform="translate(533.7 809) rotate(-90)" font-size="9.9" fill="#000" stroke="#000" stroke-width="0.12" textLength="48" lengthAdjust="spacingAndGlyphs">13.10.2008</text>
<text transform="translate(546.1 809) rotate(-90)" font-size="9.9" fill="#000" stroke="#000" stroke-width="0.12" textLength="48" lengthAdjust="spacingAndGlyphs">03.11.2008</text>
<text transform="translate(558.6 809) rotate(-90)" font-size="9.9" fill="#000" stroke="#000" stroke-width="0.12" textLength="48" lengthAdjust="spacingAndGlyphs">24.11.2008</text>
<text transform="translate(571.0 809) rotate(-90)" font-size="9.9" fill="#000" stroke="#000" stroke-width="0.12" textLength="48" lengthAdjust="spacingAndGlyphs">15.12.2008</text>
<text transform="translate(583.4 809) rotate(-90)" font-size="9.9" fill="#000" stroke="#000" stroke-width="0.12" textLength="48" lengthAdjust="spacingAndGlyphs">05.01.2009</text>
<text transform="translate(595.9 809) rotate(-90)" font-size="9.9" fill="#000" stroke="#000" stroke-width="0.12" textLength="48" lengthAdjust="spacingAndGlyphs">26.01.2009</text>
<text transform="translate(608.3 809) rotate(-90)" font-size="9.9" fill="#000" stroke="#000" stroke-width="0.12" textLength="48" lengthAdjust="spacingAndGlyphs">16.02.2009</text>
<text transform="translate(620.7 809) rotate(-90)" font-size="9.9" fill="#000" stroke="#000" stroke-width="0.12" textLength="48" lengthAdjust="spacingAndGlyphs">09.03.2009</text>
<text transform="translate(633.2 809) rotate(-90)" font-size="9.9" fill="#000" stroke="#000" stroke-width="0.12" textLength="48" lengthAdjust="spacingAndGlyphs">30.03.2009</text>
<text transform="translate(645.6 809) rotate(-90)" font-size="9.9" fill="#000" stroke="#000" stroke-width="0.12" textLength="48" lengthAdjust="spacingAndGlyphs">20.04.2009</text>
<text transform="translate(658.0 809) rotate(-90)" font-size="9.9" fill="#000" stroke="#000" stroke-width="0.12" textLength="48" lengthAdjust="spacingAndGlyphs">11.05.2009</text>
<text transform="translate(670.5 809) rotate(-90)" font-size="9.9" fill="#000" stroke="#000" stroke-width="0.12" textLength="48" lengthAdjust="spacingAndGlyphs">01.06.2009</text>
<text transform="translate(682.9 809) rotate(-90)" font-size="9.9" fill="#000" stroke="#000" stroke-width="0.12" textLength="48" lengthAdjust="spacingAndGlyphs">22.06.2009</text>
<text transform="translate(695.3 809) rotate(-90)" font-size="9.9" fill="#000" stroke="#000" stroke-width="0.12" textLength="48" lengthAdjust="spacingAndGlyphs">13.07.2009</text>
<text transform="translate(707.8 809) rotate(-90)" font-size="9.9" fill="#000" stroke="#000" stroke-width="0.12" textLength="48" lengthAdjust="spacingAndGlyphs">03.08.2009</text>
<text transform="translate(720.2 809) rotate(-90)" font-size="9.9" fill="#000" stroke="#000" stroke-width="0.12" textLength="48" lengthAdjust="spacingAndGlyphs">24.08.2009</text>
<text transform="translate(732.6 809) rotate(-90)" font-size="9.9" fill="#000" stroke="#000" stroke-width="0.12" textLength="48" lengthAdjust="spacingAndGlyphs">14.09.2009</text>
<text transform="translate(745.1 809) rotate(-90)" font-size="9.9" fill="#000" stroke="#000" stroke-width="0.12" textLength="48" lengthAdjust="spacingAndGlyphs">05.10.2009</text>
<text transform="translate(757.5 809) rotate(-90)" font-size="9.9" fill="#000" stroke="#000" stroke-width="0.12" textLength="48" lengthAdjust="spacingAndGlyphs">26.10.2009</text>
<text transform="translate(769.9 809) rotate(-90)" font-size="9.9" fill="#000" stroke="#000" stroke-width="0.12" textLength="48" lengthAdjust="spacingAndGlyphs">16.11.2009</text>
<text transform="translate(782.4 809) rotate(-90)" font-size="9.9" fill="#000" stroke="#000" stroke-width="0.12" textLength="48" lengthAdjust="spacingAndGlyphs">07.12.2009</text>
<text transform="translate(794.8 809) rotate(-90)" font-size="9.9" fill="#000" stroke="#000" stroke-width="0.12" textLength="48" lengthAdjust="spacingAndGlyphs">28.12.2009</text>
<text transform="translate(807.3 809) rotate(-90)" font-size="9.9" fill="#000" stroke="#000" stroke-width="0.12" textLength="48" lengthAdjust="spacingAndGlyphs">18.01.2010</text>
<text transform="translate(819.7 809) rotate(-90)" font-size="9.9" fill="#000" stroke="#000" stroke-width="0.12" textLength="48" lengthAdjust="spacingAndGlyphs">08.02.2010</text>
<text transform="translate(832.1 809) rotate(-90)" font-size="9.9" fill="#000" stroke="#000" stroke-width="0.12" textLength="48" lengthAdjust="spacingAndGlyphs">01.03.2010</text>
<text transform="translate(844.6 809) rotate(-90)" font-size="9.9" fill="#000" stroke="#000" stroke-width="0.12" textLength="48" lengthAdjust="spacingAndGlyphs">22.03.2010</text>
</svg>
</body></html>
